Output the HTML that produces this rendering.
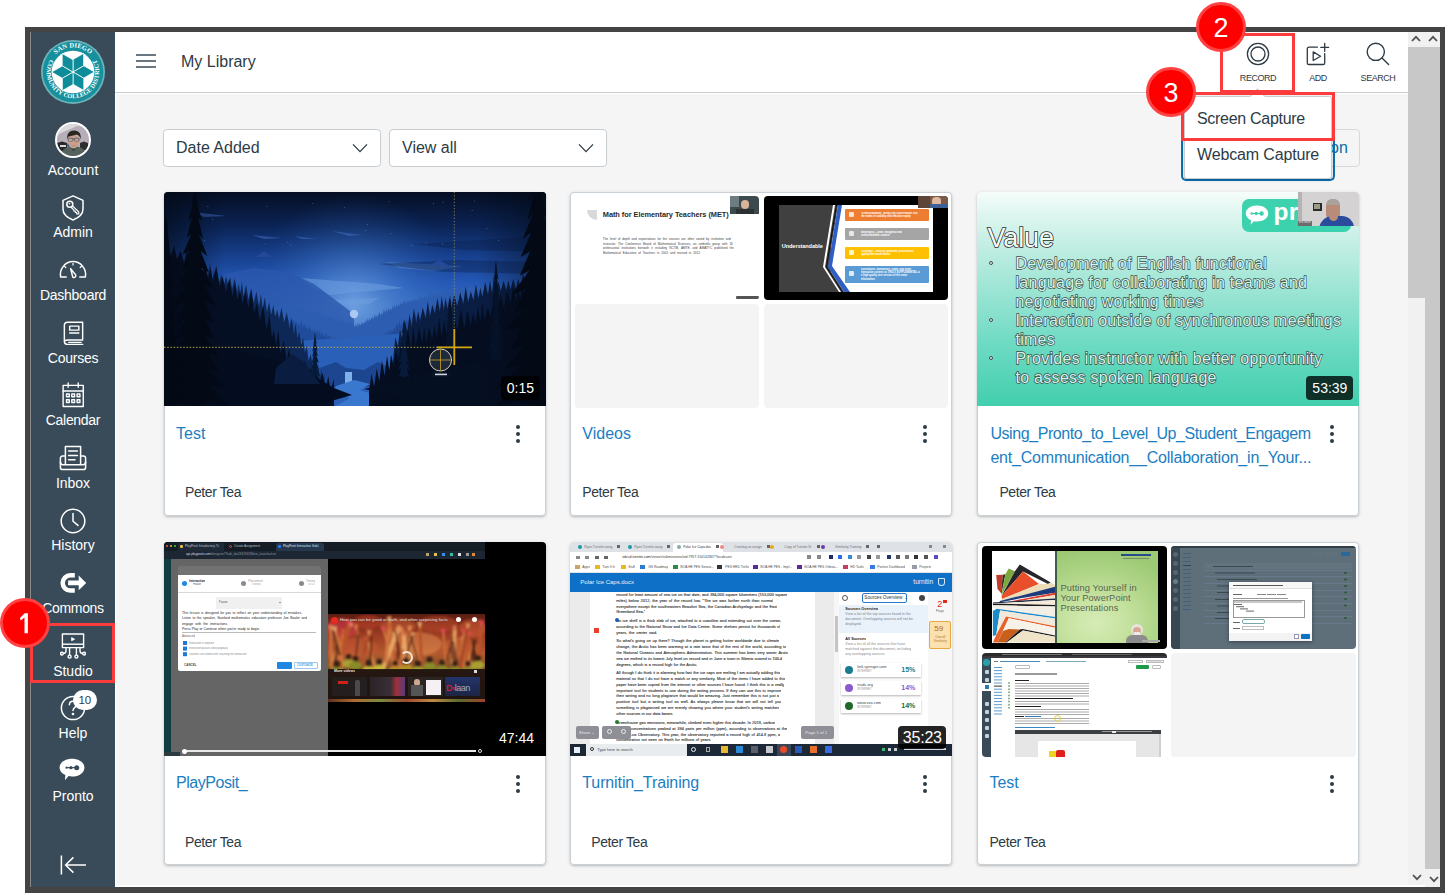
<!DOCTYPE html>
<html>
<head>
<meta charset="utf-8">
<title>Canvas Studio - My Library</title>
<style>
*{box-sizing:border-box;margin:0;padding:0}
html,body{width:1445px;height:893px;overflow:hidden;background:#fff}
body{font-family:"Liberation Sans",sans-serif;color:#2d3b45;position:relative}
.abs{position:absolute}
.hl{position:absolute;top:41px;text-align:center;font-size:9px;line-height:10px;color:#2d3b45;letter-spacing:-.45px}
.mi{font-size:16px;line-height:22px;color:#2d3b45;white-space:nowrap}
.sel svg{position:absolute;right:12px;top:13px}
#frame{position:absolute;left:25px;top:27px;width:1420px;height:866px;background:#444}
#app{position:absolute;left:30px;top:32px;width:1410px;height:855px;background:#f5f5f5;overflow:hidden}
#edge{position:absolute;left:0;top:0;width:1px;height:855px;background:#8a8a8a;z-index:3}
#side{position:absolute;left:1px;top:0;width:84px;height:855px;background:#394b58}
.nav{position:absolute;left:0;width:84px;text-align:center;color:#fff;font-size:14px;line-height:16px;white-space:nowrap}
.nav svg{position:absolute}
#head{position:absolute;left:85px;top:0;width:1293px;height:61px;background:#fff;border-bottom:1px solid #c7cdd1}
#sb1{position:absolute;left:1378px;top:0;width:17px;height:853px;background:#f1f1f1}
#sb2{position:absolute;left:1395px;top:0;width:15px;height:855px;background:#f1f1f1}
.thumbbar{position:absolute;left:0;width:17px;background:#c8c8c8}
.sel{position:absolute;top:97px;height:38px;width:218px;background:#fff;border:1px solid #c7cdd1;border-radius:4px;font-size:16px;line-height:36px;padding-left:12px;color:#2d3b45}
.card{position:absolute;width:382px;height:324.400px;background:#fff;border-radius:4px;box-shadow:inset 0 0 0 1px #c9d1d6,0 1px 2px rgba(0,0,0,.16),0 1px 4px rgba(0,0,0,.1);overflow:hidden}
.r2{height:323.400px}
.r2 .title{top:229px}
.thumb{position:absolute;left:0;top:0;width:382px;height:214px;overflow:hidden}
.title{position:absolute;left:12px;top:230px;font-size:16px;line-height:24px;color:#1b7ec2;white-space:nowrap}
.owner{position:absolute;top:291px;font-size:14px;line-height:18px;color:#2d3b45;white-space:nowrap;letter-spacing:-.4px}
.dots{position:absolute;left:351px;top:233px;width:6px;height:20px}
.dots i{position:absolute;left:1px;width:4px;height:4px;border-radius:50%;background:#2d3b45}
.dur{position:absolute;right:6px;bottom:6px;height:24px;padding:0 6px;border-radius:4px;background:rgba(0,0,0,.8);color:#fff;font-size:14px;line-height:24px}
.q{position:absolute;width:184.500px;height:104px;border-radius:4px;background:#f4f4f4;overflow:hidden}
.ln i{position:absolute;display:block}
.dl{position:absolute;left:46px;font-size:3.950px;line-height:5.820px;height:5.820px;color:#333;-webkit-text-stroke:.12px #444;white-space:nowrap;text-align:justify;text-align-last:justify;overflow:hidden}
.tt{position:absolute;white-space:nowrap;overflow:hidden}
.vb{font-size:16px;line-height:19.05px;color:#d4f4ec;-webkit-text-stroke:1.3px #3a4a46;paint-order:stroke fill;white-space:nowrap;letter-spacing:.3px}
.redc{position:absolute;width:50px;height:50px;border-radius:50%;background:#fe0000;border:3px solid #ff4141;color:#fff;font-size:27px;line-height:44px;padding-top:1px;text-align:center;z-index:20}
.redb{position:absolute;border:3px solid #fc3c3c;z-index:19}
</style>
</head>
<body>
<div id="frame"></div>
<div id="app">
  <div id="edge"></div>
  <div id="side">
    <!--NAV-->
    <svg class="abs" style="left:9px;top:7px" width="66" height="66" viewBox="-33 -33 66 66">
      <circle r="32" fill="#6fb3ba"/><circle r="30.3" fill="#15909c"/><circle r="21.3" fill="#fff"/>
      <g fill="#0f8c99" stroke="#fff" stroke-width="0.7">
        <g id="dm"><path d="M0 0 L0 -12.5 L10.6 -18.6 L10.6 -6.1 Z"/></g>
        <use href="#dm" transform="rotate(60)"/><use href="#dm" transform="rotate(120)"/><use href="#dm" transform="rotate(180)"/><use href="#dm" transform="rotate(240)"/><use href="#dm" transform="rotate(300)"/>
      </g>
      <path id="arcT" d="M -18.6 -16.2 A 24.7 24.7 0 0 1 18.6 -16.2" fill="none"/>
      <path id="arcB" d="M -22 -14.2 A 26.2 26.2 0 1 0 22 -14.2" fill="none"/>
      <text font-family="Liberation Serif" font-weight="bold" font-size="6.6" fill="#fff" letter-spacing="0.1"><textPath href="#arcT" startOffset="50%" text-anchor="middle">• SAN DIEGO •</textPath></text>
      <text font-family="Liberation Serif" font-weight="bold" font-size="6.3" fill="#fff" letter-spacing="0.05"><textPath href="#arcB" startOffset="50%" text-anchor="middle">COMMUNITY COLLEGE DISTRICT</textPath></text>
    </svg>
    <!-- Account -->
    <div class="abs" style="left:24px;top:90px;width:36px;height:36px;border-radius:50%;background:#fff"></div>
    <svg class="abs" style="left:26px;top:92px" width="32" height="32" viewBox="0 0 32 32">
      <defs><clipPath id="avc"><circle cx="16" cy="16" r="16"/></clipPath></defs>
      <g clip-path="url(#avc)">
        <rect width="32" height="32" fill="#b6aeb8"/>
        <path d="M0 0 L32 0 L32 3 L20 2 L4 9 L0 12 Z" fill="#dcdadc"/>
        <path d="M0 19 L5 17.500 L10 19 L10 27 L0 27 Z" fill="#26282a"/>
        <path d="M3 21 L9 21 L9 23 L3 23 Z" fill="#d8d8d8"/>
        <path d="M23 19 L27 17.500 L31 19 L32 26 L23 26 Z" fill="#2c2e30"/>
        <path d="M11 19 C9.500 21 10 23 11.500 24 L13 21 Z" fill="#2f5f8a"/>
        <path d="M3 32 C4 26 9 23.500 13 22.500 L20 22.500 C25 23.500 29 26 30 32 Z" fill="#56625e"/>
        <path d="M13 22.500 L16.500 27.500 L20.500 22.500 Z" fill="#3a4340"/>
        <ellipse cx="16.600" cy="17" rx="5.700" ry="7.600" fill="#c9a08c"/>
        <path d="M10.300 15.500 C9.600 10 12 6.600 17 6.500 C22 6.400 24.500 10 23.600 15.200 C23 12.500 21.500 11 19.500 10.600 C16.500 12 13 12 11.600 12.600 C11 13.400 10.600 14.400 10.300 15.500 Z" fill="#2a2422"/>
        <path d="M11 15 L22.500 15" stroke="#4a4448" stroke-width=".8"/>
        <rect x="11.200" y="14.200" width="4.600" height="3" rx="1" fill="#c8ccd4" fill-opacity=".55" stroke="#4a4448" stroke-width=".6"/>
        <rect x="17.400" y="14.200" width="4.600" height="3" rx="1" fill="#c8ccd4" fill-opacity=".55" stroke="#4a4448" stroke-width=".6"/>
        <path d="M14.600 21.300 C16 22 17.400 22 18.800 21.300" stroke="#a87868" stroke-width=".6" fill="none"/>
      </g>
    </svg>
    <div class="nav" style="top:130px">Account</div>
    <!-- Admin -->
    <svg class="abs" style="left:29px;top:163px" width="26" height="27" viewBox="0 0 26 27" fill="none" stroke="#fff" stroke-width="1.500" stroke-linejoin="round" stroke-linecap="round">
      <path d="M13 0.900 L23 5.400 L23 14 C23 19 18.500 22.800 13 25 C7.500 22.800 3 19 3 14 L3 5.400 Z"/>
      <circle cx="9.800" cy="9.300" r="3"/><circle cx="9.300" cy="8.800" r="0.450" fill="#fff" stroke-width=".6"/>
      <path d="M11.300 12.500 L12.800 11.100 L18.800 17 L18.800 18.900 L16.700 18.900 L16.700 17.500 L15.300 17.500 L15.300 16.100 L13.900 16.100 L13.900 15 Z" stroke-width="1.100"/>
    </svg>
    <div class="nav" style="top:192px">Admin</div>
    <!-- Dashboard -->
    <svg class="abs" style="left:27px;top:227.700px" width="30" height="19.300" viewBox="0 0 30 20" preserveAspectRatio="none" fill="none" stroke="#fff" stroke-width="1.5" stroke-linecap="round" stroke-linejoin="round">
      <path d="M8.2 17.6 L2.6 17.6 C1.2 9.5 7 1.6 15 1.6 C23 1.6 28.8 9.5 27.4 17.6 L21.8 17.6"/>
      <path d="M12.6 9 L17.5 15.2 C18.6 17.2 16.6 19 14.8 17.7 Z"/>
      <path d="M15 3.4 L15 5.2 M6.6 6.6 L7.8 7.8 M23.4 6.6 L22.2 7.8" stroke-width="1.2"/>
    </svg>
    <div class="nav" style="top:255px;letter-spacing:-.25px">Dashboard</div>
    <!-- Courses -->
    <svg class="abs" style="left:31.500px;top:288.600px" width="21" height="24.800" viewBox="0 0 22 26" fill="none" stroke="#fff" stroke-width="1.5" stroke-linejoin="round" stroke-linecap="round">
      <path d="M20.6 20 L20.6 1.4 L4.6 1.4 C2.6 1.4 1.4 2.6 1.4 4.4 L1.4 21.6 C1.4 23.4 2.8 24.6 4.6 24.6 L20.6 24.6 M20.6 20 L4.6 20 C2.6 20 1.4 21 1.4 22.2 M6 22.4 L19 22.4"/>
      <rect x="7" y="5.4" width="9.6" height="4.2"/><path d="M7 12.6 L16.6 12.6"/>
    </svg>
    <div class="nav" style="top:318px;letter-spacing:-.25px">Courses</div>
    <!-- Calendar -->
    <svg class="abs" style="left:30.800px;top:350px" width="22.400" height="26.200" viewBox="0 0 24 28" fill="none" stroke="#fff" stroke-width="1.5" stroke-linejoin="round" stroke-linecap="round">
      <rect x="1.2" y="3.6" width="21.6" height="22.6"/><path d="M1.2 9.6 L22.8 9.6 M6.6 1 L6.6 5.6 M17.4 1 L17.4 5.6"/>
      <g stroke-width="1.500"><rect x="4.8" y="12.8" width="3" height="3"/><rect x="10.5" y="12.8" width="3" height="3"/><rect x="16.2" y="12.8" width="3" height="3"/><rect x="4.8" y="19" width="3" height="3"/><rect x="10.5" y="19" width="3" height="3"/><rect x="16.2" y="19" width="3" height="3"/></g>
    </svg>
    <div class="nav" style="top:380px;letter-spacing:-.3px">Calendar</div>
    <!-- Inbox -->
    <svg class="abs" style="left:28px;top:413px" width="28" height="26" viewBox="0 0 28 26" fill="none" stroke="#fff" stroke-width="1.5" stroke-linejoin="round" stroke-linecap="round">
      <path d="M6.4 19 L6.4 1.4 L21.6 1.4 L21.6 19"/><path d="M9.6 6 L18.4 6 M9.6 10.4 L18.4 10.4 M9.6 14.8 L16 14.8"/>
      <path d="M6.4 11 L3.6 11 C2.2 11 1.4 12 1.4 13.2 L1.4 22.4 C1.4 23.8 2.4 24.6 3.6 24.6 L24.4 24.6 C25.8 24.6 26.6 23.6 26.6 22.4 L26.6 13.2 C26.6 11.8 25.6 11 24.4 11 L21.6 11"/>
      <path d="M1.4 17 C1.4 18.6 2.6 19.8 4 19.8 L24 19.8 C25.4 19.8 26.6 18.6 26.6 17"/>
    </svg>
    <div class="nav" style="top:443px">Inbox</div>
    <!-- History -->
    <svg class="abs" style="left:29px;top:476px" width="26" height="26" viewBox="0 0 26 26" fill="none" stroke="#fff" stroke-width="1.5" stroke-linecap="round">
      <circle cx="13" cy="13" r="11.8"/><path d="M13 5.6 L13 13.2 L18 17.4"/>
    </svg>
    <div class="nav" style="top:505px">History</div>
    <!-- Commons -->
    <svg class="abs" style="left:28.500px;top:541px" width="27" height="21" viewBox="0 0 27 21" fill="#fff">
      <path d="M14.800 0.100 L10.300 0.100 A9.850 9.850 0 0 0 10.300 19.800 L14.800 19.800 L14.800 15.300 L10.300 15.300 A5.350 5.350 0 0 1 10.300 4.600 L14.800 4.600 Z"/>
      <path d="M8.100 7.500 L18.700 7.500 L18.700 2.600 L26.200 9.900 L18.700 17.200 L18.700 12.300 L8.100 12.300 Z"/>
    </svg>
    <div class="nav" style="top:568px;letter-spacing:-.35px">Commons</div>
    <!-- Studio -->
    <svg class="abs" style="left:29px;top:601px" width="26" height="26" viewBox="0 0 26 26" fill="none" stroke="#fff" stroke-width="1.4" stroke-linejoin="round">
      <rect x="2.4" y="1" width="21.2" height="13.6"/><path d="M2.4 11.2 L23.6 11.2" />
      <path d="M11.6 4.6 L14.6 6.2 L11.6 7.8 Z" fill="#fff" stroke-width="0.8"/>
      <path d="M9.6 14.6 L9.6 22 M16.4 14.6 L16.4 22 M6 14.6 L6 18 C6 19.6 5 20.4 3.4 20.4 M20 14.6 L20 18 C20 19.6 21 20.4 22.6 20.4"/>
      <circle cx="9.6" cy="23.6" r="1.5"/><circle cx="16.4" cy="23.6" r="1.5"/><circle cx="2" cy="20.6" r="1.4"/><circle cx="24" cy="20.6" r="1.4"/>
    </svg>
    <div class="nav" style="top:631px">Studio</div>
    <!-- Help -->
    <svg class="abs" style="left:29px;top:663px" width="26" height="26" viewBox="0 0 26 26" fill="none" stroke="#fff" stroke-width="1.5" stroke-linecap="round">
      <circle cx="13" cy="13" r="11.6"/><path d="M9.4 9.8 C9.4 7.6 11 6.2 13 6.2 C15 6.2 16.6 7.6 16.6 9.6 C16.6 12.4 13 12.4 13 15.4"/><circle cx="13" cy="19" r="0.6" fill="#fff"/>
    </svg>
    <div class="abs" style="left:41.700px;top:657.700px;width:24px;height:20px;border-radius:10px;background:#fff;color:#2d3b45;font-size:11.5px;line-height:20px;text-align:center;letter-spacing:-.3px">10</div>
    <div class="nav" style="top:693px">Help</div>
    <!-- Pronto -->
    <svg class="abs" style="left:28px;top:726px" width="26" height="23.500" viewBox="0 0 27 24">
      <path d="M13.5 0.6 C20.8 0.6 26.4 4.6 26.4 9.8 C26.4 15 20.8 19 13.5 19 C12.2 19 11 18.9 9.9 18.6 L6.2 22.8 L6.6 17.4 C3 15.8 0.6 13 0.6 9.8 C0.6 4.6 6.2 0.6 13.5 0.6 Z" fill="#fff"/>
      <path d="M7.6 9.8 L18 9.8" stroke="#394b58" stroke-width="1.2"/><circle cx="7.8" cy="9.8" r="1.1" fill="#394b58"/><circle cx="12.4" cy="9.8" r="1.7" fill="#394b58"/><circle cx="18.4" cy="9.8" r="2.6" fill="#394b58"/>
    </svg>
    <div class="nav" style="top:756px">Pronto</div>
    <!-- collapse -->
    <svg class="abs" style="left:29px;top:822px" width="27" height="22" viewBox="0 0 27 22" fill="none" stroke="#fff" stroke-width="1.5">
      <path d="M1.4 1.6 L1.4 20.4 M5.6 11 L26 11 M13.4 3.4 L5.6 11 L13.4 18.6"/>
    </svg>
    <!--/NAV-->
  </div>
  <div id="head">
    <!--HEAD-->
    <div class="abs" style="left:21px;top:22px;width:20px;height:2px;background:#6b7780"></div>
    <div class="abs" style="left:21px;top:28px;width:20px;height:2px;background:#6b7780"></div>
    <div class="abs" style="left:21px;top:34px;width:20px;height:2px;background:#6b7780"></div>
    <div class="abs" style="left:66px;top:19px;font-size:16px;line-height:22px;color:#2d3b45;white-space:nowrap">My Library</div>
    <!-- RECORD -->
    <svg class="abs" style="left:1131px;top:10px" width="24" height="24" viewBox="0 0 24 24" fill="none" stroke="#2d3b45" stroke-width="1.3"><circle cx="12" cy="12" r="10.6"/><circle cx="12" cy="12" r="7"/></svg>
    <div class="hl" style="left:1113px;width:60px">RECORD</div>
    <!-- ADD -->
    <svg class="abs" style="left:1191px;top:9px" width="24" height="26" viewBox="0 0 24 26" fill="none" stroke="#2d3b45" stroke-width="1.300" stroke-linejoin="round" stroke-linecap="round">
      <path d="M11.400 6.200 L2.900 6.200 C1.900 6.200 1.300 6.800 1.300 7.800 L1.300 21.900 C1.300 22.900 1.900 23.500 2.900 23.500 L17.100 23.500 C18.100 23.500 18.700 22.900 18.700 21.900 L18.700 12.700"/>
      <path d="M7.200 10.900 L14.600 15.200 L7.200 19.500 Z"/><path d="M18.700 2.500 L18.700 10.300 M14.800 6.400 L22.600 6.400"/>
    </svg>
    <div class="hl" style="left:1173px;width:60px">ADD</div>
    <!-- SEARCH -->
    <svg class="abs" style="left:1251px;top:10px" width="24" height="24" viewBox="0 0 24 24" fill="none" stroke="#2d3b45" stroke-width="1.4" stroke-linecap="round"><circle cx="9.8" cy="9.8" r="8.6"/><path d="M16 16 L22.6 22.6"/></svg>
    <div class="hl" style="left:1233px;width:60px">SEARCH</div>
    <!--/HEAD-->
  </div>
  <div class="abs" style="left:85px;top:61px;width:1310px;height:794px;border-left:1px solid #fff;border-top:1px solid #fff;border-bottom:2px solid #fff"></div>
  <div id="main">
    <div class="sel" style="left:133px">Date Added<svg width="16" height="10" viewBox="0 0 16 10" fill="none" stroke="#2d3b45" stroke-width="1.3"><path d="M1 1.4 L8 8.6 L15 1.4"/></svg></div>
    <div class="sel" style="left:359px">View all<svg width="16" height="10" viewBox="0 0 16 10" fill="none" stroke="#2d3b45" stroke-width="1.3"><path d="M1 1.4 L8 8.6 L15 1.4"/></svg></div>
    <!--CARDS-->
    <!-- Card 1 -->
    <div class="card" style="left:134px;top:160px">
      <div class="thumb"><svg class="abs" style="left:0;top:0" width="382" height="214" viewBox="0 0 382 214">
<defs><linearGradient id="sky" x1="0" y1="0" x2="0" y2="1"><stop offset="0" stop-color="#050e22"/><stop offset=".16" stop-color="#0b2456"/><stop offset=".3" stop-color="#17408e"/><stop offset=".42" stop-color="#2458b6"/><stop offset=".56" stop-color="#3a70c2"/><stop offset=".7" stop-color="#2a5cae"/><stop offset="1" stop-color="#0a1c3c"/></linearGradient><radialGradient id="glow" cx="190" cy="112" r="110" gradientUnits="userSpaceOnUse"><stop offset="0" stop-color="#7fb0ea" stop-opacity=".75"/><stop offset=".5" stop-color="#4a82d0" stop-opacity=".35"/><stop offset="1" stop-color="#2050a0" stop-opacity="0"/></radialGradient><linearGradient id="vig" x1="0" y1="0" x2="1" y2="0"><stop offset="0" stop-color="#020812" stop-opacity=".6"/><stop offset=".16" stop-color="#020812" stop-opacity="0"/><stop offset=".82" stop-color="#020812" stop-opacity="0"/><stop offset="1" stop-color="#020812" stop-opacity=".5"/></linearGradient></defs>
<rect width="382" height="214" fill="url(#sky)"/><rect width="382" height="214" fill="url(#glow)"/>
<g fill="#6d9fe0" opacity=".55"><path d="M136 86 L215 92 L240 96 L196 100 L165 103 L150 96 Z"/><path d="M160 108 L215 106 L205 112 L175 113 Z"/><path d="M222 70 L300 74 L270 79 L235 76 Z" opacity=".6"/></g>
<g fill="#3a67b8" opacity=".6"><path d="M168 39 L198 43 L185 44 Z"/><path d="M88 43 L118 46 L100 47 Z"/><path d="M130 44 L153 47 L138 47 Z"/><path d="M30 20 L62 24 L40 25 Z"/></g>
<g fill="#0a1f4a" opacity=".38"><path d="M250 52 L382 44 L382 60 L300 58 Z"/><path d="M215 72 L290 68 L382 70 L382 82 L280 80 Z"/></g>
<path d="M60 82 L90 76 L125 80 L150 92 L190 122 L190 150 L60 150 Z" fill="#2a58ac" opacity=".8"/>
<path d="M92 65 L100 59 L108 65 Z M266 73 L275 68 L284 73 Z" fill="#24499a"/>
<path d="M95.0 214.0 L95.0 112.0 L96.1 108.5 L97.2 112.4 L98.6 109.3 L100.1 112.9 L101.2 109.4 L102.3 113.3 L103.2 110.0 L104.1 113.7 L105.3 109.5 L106.5 114.1 L107.4 111.3 L108.2 114.4 L109.0 110.1 L109.8 114.7 L111.1 112.8 L112.4 115.2 L113.9 110.5 L115.3 115.7 L116.6 112.1 L117.8 116.1 L118.7 114.3 L119.6 116.5 L120.7 114.5 L121.8 116.9 L122.7 114.3 L123.6 117.2 L124.4 114.0 L125.2 117.5 L126.3 113.2 L127.3 117.9 L128.5 114.2 L129.6 118.3 L130.7 114.5 L131.9 118.7 L133.0 116.1 L134.1 119.1 L135.6 114.4 L137.1 119.6 L138.4 115.8 L139.8 120.1 L140.8 117.6 L141.8 120.5 L142.8 118.5 L143.7 120.9 L145.0 117.9 L146.4 121.3 L147.8 118.4 L149.1 121.8 L150.6 117.7 L152.1 122.7 L152.8 120.3 L153.6 123.2 L155.0 120.3 L156.4 124.1 L157.9 121.4 L159.4 125.1 L160.2 121.5 L161.0 125.7 L162.4 123.3 L163.7 126.6 L164.5 123.8 L165.3 127.1 L166.8 123.3 L168.3 128.1 L169.1 125.6 L169.9 128.6 L170.8 126.7 L171.6 129.2 L172.9 127.1 L174.3 130.1 L175.5 127.1 L176.6 130.9 L177.5 127.0 L178.4 131.5 L179.3 127.8 L180.1 132.0 L180.9 129.1 L181.8 132.6 L182.7 130.1 L183.6 133.2 L185.1 129.3 L186.6 134.2 L187.5 129.9 L188.5 134.8 L189.4 132.0 L190.3 135.4 L191.7 132.0 L193.1 135.4 L193.9 130.1 L194.8 134.6 L195.7 131.4 L196.6 133.7 L197.9 130.1 L199.2 132.4 L200.2 129.7 L201.2 131.4 L202.0 127.2 L202.8 130.6 L203.8 126.3 L204.7 129.7 L205.7 125.8 L206.7 128.6 L208.2 124.4 L209.7 127.2 L210.9 122.0 L212.0 126.0 L212.9 123.1 L213.8 125.1 L215.3 119.9 L216.7 123.7 L217.6 120.6 L218.6 122.7 L219.9 117.2 L221.2 121.4 L222.1 116.1 L223.0 120.5 L224.4 116.0 L225.8 119.1 L226.9 116.3 L227.9 118.0 L228.7 112.8 L229.5 117.3 L230.4 112.7 L231.3 116.3 L232.3 111.4 L233.2 115.4 L234.4 111.9 L235.6 114.2 L236.5 109.6 L237.4 113.3 L238.2 110.2 L239.0 112.5 L240.1 107.4 L241.3 111.7 L242.5 108.6 L243.7 111.1 L245.2 108.2 L246.6 110.5 L247.4 107.5 L248.1 110.1 L249.2 107.7 L250.3 109.6 L251.2 106.3 L252.1 109.2 L253.3 106.5 L254.4 108.6 L255.5 103.7 L256.5 108.2 L258.0 103.8 L259.4 107.5 L260.7 103.4 L262.0 106.9 L262.8 104.6 L263.7 106.5 L264.5 101.6 L265.2 106.1 L266.5 100.9 L267.8 105.5 L268.5 101.4 L269.3 105.2 L270.4 100.7 L271.5 104.6 L272.5 99.4 L273.5 104.2 L274.3 100.4 L275.1 103.8 L276.4 98.8 L277.7 103.2 L279.0 98.8 L280.3 102.6 L281.7 97.5 L283.0 102.0 L284.0 97.7 L285.0 101.5 L286.5 96.5 L287.9 100.8 L289.0 96.2 L290.0 100.3 L291.4 96.3 L292.8 99.7 L294.0 96.2 L295.3 99.1 L296.4 95.0 L297.6 98.6 L298.4 94.4 L299.3 98.2 L300.7 93.3 L302.2 97.8 L303.5 94.6 L304.8 97.6 L306.1 93.8 L307.4 97.5 L308.5 92.9 L309.6 97.3 L310.4 93.0 L311.2 97.2 L312.0 93.3 L312.8 97.1 L313.9 94.3 L315.0 96.9 L316.3 93.3 L317.5 96.7 L318.7 91.9 L320.0 96.5 L320.9 94.4 L321.8 96.4 L322.8 92.3 L323.8 96.3 L324.7 93.7 L325.6 96.1 L327.0 92.0 L328.5 95.9 L329.5 91.2 L330.6 95.8 L331.6 91.7 L332.6 95.6 L333.5 92.3 L334.4 95.5 L335.8 90.6 L337.1 95.3 L338.5 92.0 L339.9 95.1 L341.1 92.0 L342.3 94.9 L343.2 91.4 L344.0 94.8 L345.4 90.1 L346.8 94.6 L348.1 89.6 L349.3 94.4 L350.3 91.8 L351.3 94.2 L352.3 91.3 L353.4 94.1 L354.3 90.8 L355.2 94.0 L356.5 90.4 L357.7 93.8 L358.7 89.2 L359.7 93.6 L361.1 90.2 L362.6 93.4 L363.4 91.3 L364.2 93.3 L365.7 91.1 L367.1 93.1 L368.3 89.3 L369.6 92.9 L370.6 88.5 L371.6 92.8 L372.3 90.3 L373.1 92.7 L374.2 90.5 L375.3 92.5 L376.7 89.7 L378.0 92.3 L378.9 90.1 L379.7 92.2 L381.0 88.7 L382.0 92.0 L382.0 214.0 Z" fill="#2c5db0"/>
<circle cx="190" cy="122" r="4.2" fill="#a9c9f2"/>
<path d="M80.0 214.0 L80.0 118.0 L81.3 112.7 L82.6 118.7 L84.0 115.5 L85.4 119.5 L86.3 115.3 L87.2 120.0 L88.4 114.1 L89.5 120.7 L90.9 115.7 L92.4 121.5 L93.7 116.2 L95.1 122.2 L96.1 117.7 L97.1 122.8 L98.1 116.5 L99.2 123.4 L100.1 117.4 L101.1 123.9 L102.0 118.4 L103.0 124.4 L104.2 120.1 L105.3 125.1 L106.9 122.5 L108.5 126.0 L109.4 119.6 L110.4 126.5 L111.7 123.5 L113.0 127.2 L114.7 120.9 L116.4 128.2 L117.4 123.8 L118.3 128.7 L119.4 124.8 L120.4 129.3 L121.8 126.0 L123.2 130.1 L124.6 127.3 L126.1 130.9 L127.1 124.9 L128.1 131.5 L129.4 127.1 L130.6 132.3 L132.0 128.0 L133.3 133.5 L134.5 130.9 L135.8 134.6 L137.2 128.4 L138.7 135.9 L140.4 131.0 L142.1 137.4 L143.3 133.5 L144.4 138.5 L145.9 133.5 L147.4 139.8 L148.3 136.3 L149.3 140.7 L150.5 136.2 L151.7 141.8 L153.3 137.5 L154.8 143.2 L155.7 137.3 L156.7 144.0 L157.9 139.5 L159.1 145.1 L160.2 140.9 L161.3 146.1 L162.5 140.5 L163.7 147.2 L164.7 142.4 L165.7 148.1 L166.7 142.7 L167.8 149.0 L168.7 145.3 L169.6 149.8 L170.8 144.9 L172.0 151.0 L172.9 146.6 L173.9 151.9 L174.9 148.3 L176.0 153.0 L177.3 146.8 L178.6 154.3 L179.8 148.1 L181.1 155.6 L182.2 149.4 L183.2 156.6 L184.4 153.4 L185.6 157.8 L187.1 151.9 L188.6 159.3 L189.5 155.7 L190.4 160.2 L191.9 156.6 L193.4 161.7 L194.5 159.2 L195.6 162.8 L196.5 157.8 L197.5 163.7 L199.2 157.6 L200.8 164.3 L202.1 160.1 L203.5 162.0 L204.6 154.9 L205.8 160.1 L207.3 153.2 L208.9 157.4 L210.0 151.3 L211.1 155.5 L212.3 148.9 L213.6 153.3 L214.7 145.6 L215.8 151.4 L217.5 146.4 L219.1 148.6 L220.2 141.2 L221.3 146.7 L222.5 139.0 L223.6 144.8 L224.9 137.9 L226.2 142.5 L227.7 137.4 L229.1 140.0 L230.3 135.0 L231.4 138.1 L232.8 131.1 L234.3 135.6 L235.3 128.3 L236.3 134.5 L237.5 130.0 L238.8 133.4 L240.0 126.0 L241.3 132.4 L242.6 126.3 L244.0 131.2 L245.6 123.7 L247.2 129.9 L248.7 124.6 L250.3 128.6 L251.6 121.4 L253.0 127.5 L254.5 121.5 L256.1 126.2 L257.2 121.2 L258.4 125.2 L259.9 119.3 L261.4 124.0 L262.3 117.7 L263.2 123.2 L264.8 116.3 L266.5 121.8 L268.1 114.5 L269.7 120.5 L271.0 113.8 L272.4 119.4 L273.6 115.5 L274.8 118.4 L275.9 113.6 L277.1 117.4 L278.8 110.9 L280.4 116.0 L281.8 110.0 L283.1 114.9 L284.1 109.3 L285.1 114.1 L286.6 108.9 L288.0 112.8 L289.1 107.7 L290.2 112.0 L291.4 106.1 L292.5 111.8 L293.5 108.3 L294.6 111.6 L295.7 105.7 L296.9 111.4 L298.4 105.6 L299.9 111.1 L301.5 106.5 L303.2 110.9 L304.1 105.8 L305.0 110.7 L306.3 106.9 L307.5 110.5 L309.0 106.0 L310.4 110.2 L311.5 105.8 L312.6 110.0 L314.2 106.9 L315.9 109.7 L317.1 105.5 L318.3 109.5 L319.3 104.7 L320.4 109.4 L321.5 102.6 L322.5 109.2 L323.8 103.3 L325.1 108.9 L326.2 104.0 L327.2 108.8 L328.6 102.3 L330.0 108.5 L331.1 103.6 L332.2 108.3 L333.7 101.9 L335.3 108.1 L336.4 102.8 L337.5 107.9 L339.0 103.2 L340.5 107.6 L342.0 101.8 L343.4 107.4 L345.1 102.0 L346.7 107.1 L348.2 102.5 L349.6 106.8 L351.1 102.4 L352.6 106.6 L353.9 102.0 L355.2 106.3 L356.4 102.7 L357.5 106.1 L358.6 100.9 L359.7 105.9 L360.8 102.7 L361.9 105.8 L363.4 101.5 L364.9 105.5 L366.6 99.9 L368.2 105.2 L369.5 98.6 L370.7 105.0 L372.3 100.6 L373.9 104.7 L374.9 99.1 L375.9 104.5 L377.5 99.0 L379.1 104.3 L380.6 99.5 L382.0 104.0 L382.0 214.0 Z" fill="#214c9c"/>
<path d="M120 150 L260 140 L260 214 L120 214 Z" fill="#2a60b8"/>
<path d="M150 178 L172 170 L182 176 L200 178 L214 170 L226 176 L240 180 L240 195 L150 195 Z" fill="#1c4690"/>
<rect x="181" y="180" width="7" height="12" fill="#7fb0ea"/>
<path d="M172 194 L190 188 L206 192 L196 198 L214 204 L238 214 L172 214 L186 206 L170 200 Z" fill="#3a78d0"/>
<path d="M40.0 214.0 L40.0 82.0 L41.8 70.2 L43.6 83.9 L46.0 71.3 L48.4 86.5 L50.1 77.8 L51.8 88.3 L53.5 79.6 L55.2 90.1 L57.6 82.5 L60.0 92.7 L62.2 84.3 L64.4 95.0 L66.2 85.0 L68.1 97.0 L70.6 86.2 L73.2 100.1 L74.7 91.2 L76.2 102.1 L77.9 89.2 L79.6 104.4 L82.1 92.4 L84.6 107.7 L87.1 96.2 L89.7 111.1 L92.4 99.4 L95.1 114.7 L96.9 102.0 L98.7 117.1 L100.8 105.2 L102.9 119.9 L105.1 110.2 L107.3 122.7 L109.3 112.9 L111.2 125.1 L113.1 117.5 L115.0 127.6 L117.5 115.6 L120.1 130.8 L122.8 120.2 L125.5 136.5 L127.7 126.1 L129.9 142.2 L131.6 131.6 L133.3 146.5 L135.3 139.9 L137.4 153.0 L139.1 145.2 L140.9 160.7 L142.7 153.5 L144.5 168.7 L146.8 162.3 L149.0 176.3 L150.7 167.2 L152.3 181.1 L154.1 174.0 L155.9 186.2 L157.7 178.1 L159.4 191.2 L161.0 179.4 L160.0 192.0 L160.0 214.0 Z" fill="#0d2856"/>
<path d="M225.0 214.0 L225.0 185.0 L226.9 163.1 L228.8 171.8 L231.3 145.4 L233.9 153.9 L236.0 137.5 L238.1 146.3 L240.7 128.2 L243.4 139.9 L245.5 122.2 L247.7 134.8 L249.9 116.1 L252.2 131.0 L254.1 119.0 L256.0 129.1 L258.8 115.5 L261.7 126.4 L263.8 109.1 L265.9 124.4 L268.4 112.8 L270.9 121.9 L273.4 105.8 L275.8 119.7 L277.8 104.2 L279.7 118.5 L281.6 105.8 L283.5 117.3 L285.4 105.8 L287.2 116.1 L290.2 102.5 L293.2 114.2 L296.2 100.3 L299.2 112.3 L301.7 94.5 L304.2 110.3 L306.8 99.3 L309.4 108.2 L311.9 92.5 L314.4 106.2 L316.4 95.6 L318.3 104.7 L321.2 89.9 L324.0 102.4 L326.0 88.5 L328.0 100.8 L330.0 83.8 L332.0 99.7 L334.4 89.4 L336.8 99.0 L339.6 88.7 L342.3 98.1 L344.4 88.5 L346.5 97.5 L349.2 87.0 L351.9 96.6 L354.3 86.4 L356.7 95.9 L359.1 80.4 L361.4 95.2 L363.8 81.7 L366.2 94.4 L368.6 81.1 L371.0 93.7 L373.5 83.5 L375.9 92.9 L378.3 81.4 L380.6 92.2 L383.5 74.5 L382.0 92.0 L382.0 214.0 Z" fill="#0a1d42"/>
<path d="M0.0 214.0 L0.0 60.0 L3.4 51.7 L6.9 63.7 L10.0 53.8 L13.1 67.0 L16.6 58.7 L20.1 70.7 L23.4 55.7 L26.7 74.2 L30.0 56.0 L33.3 78.4 L35.6 66.7 L38.0 81.9 L41.1 71.3 L44.1 86.4 L46.5 75.8 L48.9 89.9 L52.2 73.5 L55.5 94.7 L58.7 84.8 L61.9 99.3 L65.3 86.6 L68.6 104.2 L71.0 91.3 L73.3 107.5 L76.0 98.6 L78.6 111.3 L81.4 99.7 L84.3 115.4 L87.2 98.1 L90.0 120.7 L93.0 110.6 L95.9 128.6 L99.2 113.0 L102.5 137.4 L105.3 121.6 L108.0 145.7 L110.0 138.0 L112.1 153.1 L114.3 137.9 L116.6 161.4 L119.6 148.4 L122.6 168.6 L125.1 156.1 L127.5 173.5 L130.8 165.8 L134.2 180.2 L136.3 171.9 L138.5 184.5 L141.2 168.2 L143.9 187.8 L146.8 175.1 L149.6 190.5 L152.3 180.0 L155.1 193.0 L158.5 181.1 L161.9 196.2 L164.3 184.2 L166.6 198.4 L169.9 186.8 L170.0 200.0 L170.0 214.0 Z" fill="#050f24"/>
<path d="M205.0 214.0 L205.0 200.0 L207.5 181.6 L210.1 194.7 L212.7 176.6 L215.3 189.2 L217.9 168.6 L220.6 183.8 L223.0 163.6 L225.3 178.8 L227.4 163.0 L229.4 174.2 L231.9 159.1 L234.4 167.5 L237.5 149.6 L240.6 159.7 L243.8 136.8 L247.0 156.8 L249.4 135.0 L251.7 154.7 L254.9 135.2 L258.2 151.7 L260.2 135.3 L262.2 149.9 L265.2 135.3 L268.1 147.8 L270.5 133.3 L272.8 146.1 L275.2 125.8 L277.6 144.4 L280.1 128.5 L282.6 142.6 L285.6 120.2 L288.5 140.5 L291.0 129.1 L293.4 138.6 L296.9 117.3 L300.3 135.9 L303.5 118.3 L306.7 133.3 L309.1 120.5 L311.4 131.4 L313.9 114.9 L316.3 129.5 L318.4 110.2 L320.5 127.7 L323.6 115.7 L326.7 124.0 L330.0 106.1 L333.2 120.1 L336.6 102.3 L340.0 116.0 L343.2 98.6 L346.4 112.2 L349.3 94.4 L352.2 109.3 L354.3 96.9 L356.3 108.0 L358.6 92.4 L361.0 106.6 L363.5 89.3 L366.1 105.0 L369.1 89.2 L372.1 103.1 L374.5 86.2 L377.0 101.6 L380.5 81.1 L382.0 100.0 L382.0 214.0 Z" fill="#050e21"/>
<path d="M151.0 140.0 L151.9 147.4 L151.4 144.7 L152.8 152.2 L151.8 151.0 L153.7 159.4 L152.2 157.3 L153.8 164.2 L152.3 163.6 L154.8 170.6 L152.7 169.9 L154.9 177.4 L152.8 176.1 L156.7 185.2 L153.6 182.4 L152.5 184.0 L149.5 184.0 L148.4 182.4 L145.3 185.6 L149.2 176.1 L147.1 176.8 L149.3 169.9 L147.2 172.8 L149.7 163.6 L148.2 165.3 L149.8 157.3 L148.3 159.4 L150.2 151.0 L149.2 153.9 L150.6 144.7 L150.1 147.2 Z" fill="#081a3a"/>
<path d="M240.0 128.0 L241.3 134.5 L240.6 133.3 L242.3 141.8 L241.0 140.5 L242.8 149.4 L241.3 147.6 L243.0 158.4 L241.4 154.7 L244.2 165.4 L241.9 161.8 L245.4 171.9 L242.4 169.0 L246.0 178.6 L242.7 176.1 L245.2 186.5 L242.3 183.2 L241.5 185.0 L238.5 185.0 L237.7 183.2 L234.8 185.7 L237.3 176.1 L234.0 177.8 L237.6 169.0 L234.6 169.9 L238.1 161.8 L235.8 164.7 L238.6 154.7 L237.0 156.5 L238.7 147.6 L237.2 151.0 L239.0 140.5 L237.7 141.6 L239.4 133.3 L238.7 134.2 Z" fill="#081a3a"/>
<path d="M286.0 104.0 L287.4 113.2 L286.6 109.5 L287.7 119.4 L286.8 116.8 L288.9 125.4 L287.3 124.2 L289.5 133.0 L287.6 131.5 L289.5 139.9 L287.6 138.8 L290.8 148.5 L288.2 146.2 L291.3 154.5 L288.4 153.5 L292.4 163.6 L288.9 160.8 L294.0 170.1 L289.6 168.2 L287.5 170.0 L284.5 170.0 L282.4 168.2 L278.0 171.3 L283.1 160.8 L279.6 163.5 L283.6 153.5 L280.7 156.7 L283.8 146.2 L281.2 149.2 L284.4 138.8 L282.5 141.8 L284.4 131.5 L282.5 133.7 L284.7 124.2 L283.1 125.6 L285.2 116.8 L284.3 118.9 L285.4 109.5 L284.6 113.0 Z" fill="#06132b"/>
<path d="M332.0 68.0 L333.3 79.7 L332.6 75.7 L334.5 88.0 L333.1 85.9 L334.5 99.9 L333.1 96.0 L336.0 110.0 L333.8 106.2 L336.4 120.6 L334.0 116.5 L336.5 129.8 L334.0 126.6 L338.4 139.7 L334.9 136.8 L339.6 148.9 L335.4 147.0 L340.1 159.3 L335.6 157.2 L339.3 170.6 L335.3 167.4 L333.5 170.0 L330.5 170.0 L328.7 167.4 L324.7 170.1 L328.4 157.2 L323.9 159.8 L328.6 147.0 L324.4 150.9 L329.1 136.8 L325.6 139.3 L330.0 126.6 L327.5 131.1 L330.0 116.5 L327.6 121.0 L330.2 106.2 L328.0 110.1 L330.9 96.0 L329.5 98.1 L330.9 85.9 L329.5 89.4 L331.4 75.7 L330.7 77.7 Z" fill="#06132b"/>
<path d="M0 150 L60 156 L110 168 L140 178 L170 196 L188 203 L150 214 L0 214 Z" fill="#040d1f"/>
<path d="M382 160 L330 168 L280 176 L240 188 L200 197 L232 204 L250 214 L382 214 Z" fill="#050f22"/>
<path d="M112 176 L128 162 L140 170 L156 192 L110 192 Z" fill="#0a1d40"/>
<path d="M31.0 -4.0 L34.1 12.1 L32.4 8.6 L38.0 29.0 L34.1 25.3 L39.2 47.6 L34.7 42.1 L43.4 64.1 L36.6 58.9 L44.8 80.2 L37.2 75.7 L49.6 95.9 L39.4 92.4 L51.6 113.6 L40.3 109.2 L49.6 130.2 L39.4 126.0 L50.5 146.6 L39.8 142.7 L55.1 165.6 L41.9 159.5 L55.3 180.1 L41.9 176.3 L63.3 196.3 L45.5 193.0 L64.1 215.0 L45.9 209.8 L32.5 214.0 L29.5 214.0 L16.1 209.8 L-2.1 213.7 L16.5 193.0 L-1.3 198.4 L20.1 176.3 L6.7 182.0 L20.1 159.5 L6.9 165.2 L22.2 142.7 L11.5 147.7 L22.6 126.0 L12.4 132.0 L21.7 109.2 L10.4 113.0 L22.6 92.4 L12.4 95.7 L24.8 75.7 L17.2 80.1 L25.4 58.9 L18.6 62.5 L27.3 42.1 L22.8 45.7 L27.9 25.3 L24.0 28.9 L29.6 8.6 L27.9 12.9 Z" fill="#030a17"/>
<path d="M2.0 20.0 L4.5 40.3 L3.1 34.5 L6.0 59.8 L3.8 53.9 L8.8 77.8 L5.1 73.4 L9.8 98.1 L5.5 92.8 L11.1 117.3 L6.1 112.2 L12.9 136.3 L6.9 131.6 L13.7 155.0 L7.3 151.0 L16.2 175.5 L8.4 170.3 L18.5 195.3 L9.4 189.8 L15.5 213.2 L8.1 209.2 L3.5 214.0 L0.5 214.0 L-4.1 209.2 L-11.5 215.9 L-5.4 189.8 L-14.5 195.6 L-4.4 170.3 L-12.2 176.7 L-3.3 151.0 L-9.7 156.6 L-2.9 131.6 L-8.9 136.3 L-2.1 112.2 L-7.1 118.8 L-1.5 92.8 L-5.8 99.5 L-1.1 73.4 L-4.8 79.2 L0.2 53.9 L-2.0 60.5 L0.9 34.5 L-0.5 40.9 Z" fill="#030a17"/>
<path d="M374.0 -30.0 L378.3 -11.6 L375.9 -15.9 L384.0 8.0 L378.5 2.8 L384.3 26.8 L378.7 21.6 L389.3 46.9 L380.9 40.4 L391.3 62.8 L381.8 59.2 L392.2 81.6 L382.2 77.9 L400.7 102.9 L386.0 96.7 L397.6 119.4 L384.6 115.5 L408.0 138.3 L389.3 134.2 L400.2 156.8 L385.8 153.0 L406.3 176.0 L388.5 171.8 L416.2 194.7 L393.0 190.5 L416.3 214.7 L393.1 209.3 L375.5 214.0 L372.5 214.0 L354.9 209.3 L331.7 214.7 L355.0 190.5 L331.8 196.7 L359.5 171.8 L341.7 176.4 L362.2 153.0 L347.8 156.8 L358.7 134.2 L340.0 138.4 L363.4 115.5 L350.4 119.5 L362.0 96.7 L347.3 103.2 L365.8 77.9 L355.8 83.8 L366.2 59.2 L356.7 65.1 L367.1 40.4 L358.7 46.7 L369.3 21.6 L363.7 27.8 L369.5 2.8 L364.0 8.7 L372.1 -15.9 L369.7 -11.3 Z" fill="#030a17"/>
<rect width="382" height="214" fill="url(#vig)"/>
<g fill="#9fbfe8" opacity=".7"><circle cx="226.9" cy="41.6" r=".45"/><circle cx="278.6" cy="52.0" r=".45"/><circle cx="262.0" cy="51.0" r=".45"/><circle cx="48.7" cy="27.2" r=".45"/><circle cx="323.0" cy="36.7" r=".45"/><circle cx="310.3" cy="8.9" r=".45"/><circle cx="180.7" cy="15.8" r=".45"/><circle cx="203.1" cy="32.8" r=".45"/><circle cx="43.9" cy="14.3" r=".45"/><circle cx="123.8" cy="50.6" r=".45"/><circle cx="269.7" cy="11.3" r=".45"/><circle cx="279.1" cy="10.2" r=".45"/><circle cx="225.2" cy="9.6" r=".45"/><circle cx="40.5" cy="48.3" r=".45"/><circle cx="102.8" cy="14.2" r=".45"/><circle cx="334.7" cy="48.4" r=".45"/><circle cx="126.8" cy="53.0" r=".45"/><circle cx="201.8" cy="38.2" r=".45"/><circle cx="101.4" cy="51.9" r=".45"/><circle cx="247.2" cy="53.3" r=".45"/><circle cx="308.1" cy="18.5" r=".45"/><circle cx="148.4" cy="11.6" r=".45"/></g>
<path d="M0 155.3 L290 155.3" stroke="#c8b04a" stroke-width=".9" stroke-dasharray="1.6 1.6" fill="none"/>
<path d="M290.3 0 L290.3 155" stroke="#b9a85a" stroke-width=".8" stroke-dasharray="1.4 1.8" fill="none" opacity=".8"/>
<path d="M273 155.3 L308 155.3 M290.3 137 L290.3 173" stroke="#d4a60e" stroke-width="1.8" fill="none"/>
<circle cx="276.5" cy="168" r="11" fill="#3b4a5a" fill-opacity=".45" stroke="#d8d2b8" stroke-width="1"/><path d="M266 168 L287 168 M276.5 157.5 L276.5 178.5" stroke="#c9a21a" stroke-width=".8"/>
<rect x="268" y="180" width="18" height="5" fill="#0a1428"/><rect x="271" y="181.6" width="12" height="1.6" fill="#cfd6e0"/>
</svg>
        <div class="dur">0:15</div>
      </div>
      <div class="title">Test</div><div class="dots"><i style="top:0"></i><i style="top:7px"></i><i style="top:14px"></i></div>
      <div class="owner" style="left:21px">Peter Tea</div>
    </div>
    <!-- Card 2 -->
    <div class="card" style="left:540.300px;top:160px">
      <div class="q" style="left:4.500px;top:4px;background:#fff">
        <div class="abs" style="left:12px;top:14px;width:10px;height:10px;border-radius:0 0 0 10px;background:#d9d9d9"></div>
        <div class="abs" style="left:28px;top:13.500px;font-size:7.400px;line-height:10px;font-weight:bold;color:#2a2a2a;white-space:nowrap;letter-spacing:-.05px">Math for Elementary Teachers (MET)</div>
        <div class="tt" style="left:28px;top:41.2px;width:128px;font-size:3.050px;line-height:4.600px;color:#3c3c3c;text-align:justify;text-align-last:justify">The level of depth and expectations for the courses are often varied by institution and</div><div class="tt" style="left:28px;top:45.8px;width:130px;font-size:3.050px;line-height:4.600px;color:#3c3c3c;text-align:justify;text-align-last:justify">instructor. The Conference Board of Mathematical Sciences, an umbrella group with 16</div><div class="tt" style="left:28px;top:50.4px;width:131px;font-size:3.050px;line-height:4.600px;color:#3c3c3c;text-align:justify;text-align-last:justify">professional institutions beneath it including NCTM, AMTE, and AMATYC published the</div><div class="tt" style="left:28px;top:55.0px;width:98px;font-size:3.050px;line-height:4.600px;color:#3c3c3c;text-align:justify;text-align-last:justify">Mathematical Education of Teachers in 2001 and revised in 2012.</div>
        
        <div class="abs" style="left:155px;top:0;width:30px;height:18px;background:#3c4a4e"><div class="abs" style="left:11px;top:4px;width:8px;height:9px;border-radius:4px;background:#d9b39b"></div><div class="abs" style="left:6px;top:13px;width:18px;height:5px;background:#2b3133"></div><div class="abs" style="left:0;top:0;width:9px;height:11px;background:#6d7c7f"></div></div>
        <div class="abs" style="left:161px;top:100px;width:23px;height:3px;background:#555;border-radius:1px"></div>
      </div>
      <div class="q" style="left:193.500px;top:4px;background:#000">
        <div class="abs" style="left:15px;top:9px;width:154px;height:87px;background:#fff"></div>
        <div class="abs" style="left:15px;top:9px;width:52px;height:87px;background:#404040"></div>
        <svg class="abs" style="left:58px;top:9px" width="32" height="87" viewBox="0 0 32 87"><path d="M9 0 L16 0 L6 62 L22 87 L0 87 L0 0 Z" fill="#404040"/><path d="M11 0 L13 0 L3 62 L19 87 L17 87 L1 62 Z" fill="#fff"/><path d="M16 0 L20 0 L10 61 L28 87 L22 87 L6 62 Z" fill="#2f5fc4"/><path d="M14 0 L15 0 L5 62 L21 87 L20 87 L4 62 Z" fill="#111"/></svg>
        <div class="abs" style="left:18px;top:46px;font-size:5.6px;line-height:8px;color:#fff;font-weight:bold;letter-spacing:-.1px">Understandable</div>
        <div class="abs" style="left:81px;top:13px;width:84px;height:12px;background:#ed7d31;border-radius:1px"></div>
        <div class="abs" style="left:81px;top:32px;width:84px;height:12px;background:#a5a5a5;border-radius:1px"></div>
        <div class="abs" style="left:81px;top:51px;width:84px;height:12px;background:#ffc000;border-radius:1px"></div>
        <div class="abs" style="left:81px;top:70px;width:84px;height:17px;background:#5b9bd5;border-radius:1px"></div>
        <div class="tt" style="left:97px;top:15.5px;font-size:2.550px;line-height:3.400px;color:#fff;font-weight:bold;white-space:nowrap">“Understandable” brings the conversation into<br>the realm of usability and effective equity</div><div class="tt" style="left:97px;top:34.5px;font-size:2.550px;line-height:3.400px;color:#fff;font-weight:bold;white-space:nowrap">Meaningful – clear, thoughtful and<br>understandable content</div><div class="tt" style="left:97px;top:53.5px;font-size:2.550px;line-height:3.400px;color:#fff;font-weight:bold;white-space:nowrap">Language – effective grammar, punctuation,<br>appropriate word choice</div><div class="tt" style="left:97px;top:71.6px;font-size:2.550px;line-height:3.400px;color:#fff;font-weight:bold;white-space:nowrap">Illustrations, animations, video, and other<br>interactive content as TRULY SUPPLEMENTAL to<br>a high quality text version of the same<br>information</div><div class="abs" style="left:85px;top:16px;width:5px;height:5px;background:#fbe0cc;box-shadow:0 19px 0 #e8e8e8,0 38px 0 #fff4cc,0 59px 0 #dcebf8;border-radius:1px"></div>
        <div class="abs" style="left:154px;top:0;width:31px;height:12px;background:#7b5a48"><div class="abs" style="left:14px;top:1px;width:9px;height:9px;border-radius:4px;background:#e0b9a2"></div><div class="abs" style="left:10px;top:8px;width:21px;height:4px;background:#3d5f9a"></div><div class="abs" style="left:0;top:0;width:12px;height:12px;background:#5d4436"></div></div>
      </div>
      <div class="q" style="left:4.500px;top:112px"></div>
      <div class="q" style="left:193.500px;top:112px"></div>
      <div class="title">Videos</div><div class="dots" style="left:352px"><i style="top:0"></i><i style="top:7px"></i><i style="top:14px"></i></div>
      <div class="owner" style="left:12px">Peter Tea</div>
    </div>
    <!-- Card 3 -->
    <div class="card" style="left:947.400px;top:160px">
      <div class="thumb" style="background:linear-gradient(180deg,#f6fdfb 0%,#dff6f0 10%,#c2eee3 25%,#98e4d3 48%,#6cdac2 72%,#42cfae 100%)">
        <div class="abs" style="left:264.600px;top:7px;width:109.400px;height:33px;border-radius:7px;background:#3dd2ae"></div>
        <svg class="abs" style="left:268px;top:13px" width="24" height="20" viewBox="0 0 27 23"><path d="M13.500 0.600 C20.800 0.600 26.400 4.600 26.400 9.800 C26.400 15 20.800 19 13.500 19 C12.200 19 11 18.900 9.900 18.600 L6.200 22.600 L6.600 17.400 C3 15.800 0.600 13 0.600 9.800 C0.600 4.600 6.200 0.600 13.500 0.600 Z" fill="#fff"/><path d="M7 9.800 L18 9.800" stroke="#3dd2ae" stroke-width="1.200"/><circle cx="7.400" cy="9.800" r="1.400" fill="#3dd2ae"/><circle cx="12.600" cy="9.800" r="1.900" fill="#3dd2ae"/><circle cx="18.800" cy="9.800" r="2.500" fill="#3dd2ae"/></svg>
        <div class="abs" style="left:296px;top:5px;font-size:24.500px;line-height:30px;font-weight:bold;color:#fff;letter-spacing:.4px">pr</div>
        <div class="abs" style="left:320.600px;top:0;width:61.400px;height:34px;background:#d4d2d3;overflow:hidden">
          <div class="abs" style="left:0;top:0;width:4px;height:34px;background:#b6b2b2"></div>
          <div class="abs" style="left:14.600px;top:10.500px;width:9.500px;height:8.700px;background:#2a2a28"></div>
          <div class="abs" style="left:16.200px;top:12.300px;width:6.300px;height:5px;background:#9a9a88"></div>
          <div class="abs" style="left:28px;top:6.800px;width:14px;height:22px;border-radius:7px 7px 6px 6px;background:#b98c7a"></div>
          <div class="abs" style="left:28px;top:6.500px;width:14px;height:6px;border-radius:7px 7px 0 0;background:#aaa29c"></div>
          <div class="abs" style="left:21px;top:23.500px;width:35px;height:16px;border-radius:14px 12px 0 0;background:#2b4b9c"></div>
          <div class="abs" style="left:31px;top:22.500px;width:9px;height:6px;border-radius:0 0 5px 5px;background:#b98c7a"></div>
          <div class="abs" style="left:0;top:29.200px;width:13.700px;height:4.800px;background:#6c6c6c"></div>
          <div class="tt" style="left:1px;top:29.400px;font-size:2.700px;line-height:4.800px;color:#e4e4e4">Eric Miller</div>
        </div>
        <div class="abs vt" style="left:10px;top:30px;font-size:27px;line-height:32px;-webkit-text-stroke:1.5px #2a2a2a;paint-order:stroke fill;color:#f4fbf9;letter-spacing:-.1px">Value</div>
        <div class="abs vb" style="left:38px;top:61.500px">Development of English functional<br>language for collaborating in teams and<br>negotiating working times<br>Interaction outside of synchronous meetings<br>times<br>Provides instructor with better opportunity<br>to assess spoken language</div>
        <div class="abs" style="left:12px;top:69px;width:4px;height:4px;border-radius:50%;border:1px solid #444;background:#e8f8f4"></div><div class="abs" style="left:12px;top:126px;width:4px;height:4px;border-radius:50%;border:1px solid #444;background:#e8f8f4"></div><div class="abs" style="left:12px;top:164px;width:4px;height:4px;border-radius:50%;border:1px solid #444;background:#e8f8f4"></div>
        <div class="dur" style="background:rgba(8,30,24,.9)">53:39</div>
      </div>
      <div class="title" style="left:13px;top:230px;letter-spacing:-.42px">Using_Pronto_to_Level_Up_Student_Engagem<br><span style="letter-spacing:-.2px">ent_Communication__Collaboration_in_Your...</span></div><div class="dots" style="left:352px"><i style="top:0"></i><i style="top:7px"></i><i style="top:14px"></i></div>
      <div class="owner" style="left:22px">Peter Tea</div>
    </div>
    <!-- Card 4 -->
    <div class="card r2" style="left:134px;top:509.700px">
      <div class="thumb" style="background:#000">
        <div class="abs" style="left:0;top:0;width:321px;height:9px;background:#141c26"></div>
        <div class="abs" style="left:0;top:9px;width:321px;height:8px;background:#1d2733"></div>
        <div class="abs" style="left:14px;top:1px;width:46px;height:8px;background:#1f2a38;border-radius:2px 2px 0 0"></div>
        <div class="abs" style="left:112px;top:1px;width:48px;height:8px;background:#26384e;border-radius:2px 2px 0 0"></div>
        <div class="abs" style="left:2px;top:3px;width:2px;height:2px;border-radius:50%;background:#e55;box-shadow:4px 0 0 #eb3,8px 0 0 #4c4"></div>
        <div class="tt" style="left:21px;top:1.500px;width:34px;font-size:3.100px;line-height:6px;color:#b8c0ca">PlayPosit Introductory Traini</div><div class="tt" style="left:70px;top:1.500px;width:34px;font-size:3.100px;line-height:6px;color:#b8c0ca">Create Assignment</div><div class="tt" style="left:119px;top:1.500px;width:36px;font-size:3.100px;line-height:6px;color:#dfe5ec">PlayPosit Interactive Sub-Do</div><div class="abs" style="left:16px;top:3px;width:3px;height:3px;background:#e8c040;border-radius:1px"></div><div class="abs" style="left:65px;top:3px;width:3px;height:3px;border-radius:50%;border:.6px solid #e04a3a"></div><div class="abs" style="left:114px;top:3px;width:3px;height:3px;background:#2a7ae0;border-radius:1px"></div>
        <div class="tt" style="left:22px;top:9.500px;font-size:3.200px;line-height:7px;color:#8a94a0"><span style="color:#d8dee6">api.playposit.com</span>/designer/?hub_id=18419428&amp;no_launch=true</div>
        <div class="abs" style="left:262px;top:11px;width:3px;height:3px;background:#bba36a;box-shadow:8px 0 0 #e0c04a,16px 0 0 #2f8fe0,24px 0 0 #38c0a0,32px 0 0 #ddd,40px 0 0 #999,46px 0 0 #e08a3a"></div>
        <div class="abs" style="left:0;top:17px;width:7px;height:197px;background:#0f3b41"></div>
        <div class="abs" style="left:7px;top:17px;width:157px;height:197px;background:#656565"></div>
        <div class="abs" style="left:14px;top:24px;width:143px;height:9px;background:#727272;border-radius:2px 2px 0 0"></div>
        <div class="abs" style="left:14px;top:33px;width:143px;height:96px;background:#fff;border-radius:0 0 2px 2px"></div>
        <div class="abs" style="left:14px;top:50px;width:143px;height:1px;background:#d8d8d8"></div>
        <div class="abs" style="left:18px;top:39px;width:5px;height:5px;border-radius:50%;background:#1f88e5;box-shadow:59px 0 0 #8a8a8a,117px 0 0 #8a8a8a"></div>
        <div class="tt" style="left:25px;top:37px;font-size:3.200px;line-height:4.500px;color:#222;font-weight:bold">Interaction</div><div class="tt" style="left:84px;top:37px;font-size:3.200px;line-height:4.500px;color:#9a9a9a">Placement</div><div class="tt" style="left:142px;top:37px;font-size:3.200px;line-height:4.500px;color:#9a9a9a">Timing</div>
        <div class="tt" style="left:29px;top:41.200px;font-size:2.700px;line-height:4px;color:#444">Pause</div><div class="tt" style="left:88px;top:41.200px;font-size:2.700px;line-height:4px;color:#b0b0b0">Sidebar</div><div class="tt" style="left:144px;top:41.200px;font-size:2.700px;line-height:4px;color:#b0b0b0">00:01</div>
        <div class="abs" style="left:52px;top:55px;width:66px;height:12px;background:#f0f0f0"></div>
        <div class="tt" style="left:54.500px;top:58px;font-size:3.200px;line-height:5px;color:#555">Pause</div><div class="abs" style="left:115px;top:60px;width:0;height:0;border-left:1px solid transparent;border-right:1px solid transparent;border-top:1.500px solid #444"></div>
        <div class="tt" style="left:18px;top:69.500px;width:120px;font-size:3.350px;line-height:5.300px;color:#222;text-align:justify;text-align-last:justify">This lesson is designed for you to reflect on your understanding of mistakes.</div><div class="tt" style="left:18px;top:74.800px;width:125px;font-size:3.350px;line-height:5.300px;color:#222;text-align:justify;text-align-last:justify">Listen to the speaker, Stanford mathematics education professor Joe Boaler and</div><div class="tt" style="left:18px;top:80.100px;width:46px;font-size:3.350px;line-height:5.300px;color:#222;text-align:justify;text-align-last:justify">engage with the interactions.</div><div class="tt" style="left:18px;top:85.400px;width:78px;font-size:3.350px;line-height:5.300px;color:#222;text-align:justify;text-align-last:justify">Press Play or Continue when you're ready to begin.</div>
        
        
        <div class="abs" style="left:18px;top:90.5px;width:134px;height:.8px;background:#bbb"></div>
        <div class="tt" style="left:18px;top:92.200px;font-size:2.900px;line-height:4.500px;color:#666;text-decoration:underline">Advanced</div>
        <div class="abs" style="left:19px;top:99px;width:4px;height:4px;background:#1f78d8;box-shadow:0 5.6px 0 #1f78d8,0 11.2px 0 #1f78d8"></div>
        <div class="tt" style="left:25px;top:100px;font-size:2.600px;line-height:4.400px;color:#8a8a8a">Interaction is required</div><div class="tt" style="left:25px;top:105.600px;font-size:2.600px;line-height:4.400px;color:#8a8a8a">Interaction pauses video playback</div><div class="tt" style="left:25px;top:111.200px;font-size:2.600px;line-height:4.400px;color:#8a8a8a">Learners can rewind after reaching this interaction</div>
        <div class="tt" style="left:20px;top:121px;font-size:2.900px;line-height:5px;color:#444;font-weight:bold;letter-spacing:.1px">CANCEL</div><div class="tt" style="left:116px;top:121px;font-size:2.700px;line-height:5px;color:#fff;font-weight:bold">DONE</div><div class="tt" style="left:133px;top:121px;font-size:2.700px;line-height:5px;color:#4a9ae8;font-weight:bold">CUSTOMIZE</div>
        <div class="abs" style="left:113px;top:120px;width:15px;height:7px;background:#1f88e5;border-radius:1px"></div>
        <div class="abs" style="left:130px;top:120px;width:24px;height:7px;border:1px solid #9cc7f0;border-radius:1px"></div>
        <!-- video still -->
        <div class="abs" style="left:164px;top:72px;width:157px;height:88px;overflow:hidden;background:linear-gradient(180deg,#7a2417 0%,#b0452a 22%,#c4633a 45%,#9c4a2a 62%,#5a3020 100%)">
          <svg class="abs" style="left:0;top:0" width="157" height="56" viewBox="0 0 157 56"><defs><linearGradient id="cbg" x1="0" y1="0" x2="0" y2="1"><stop offset="0" stop-color="#5a1c12"/><stop offset=".35" stop-color="#9a3a22"/><stop offset=".7" stop-color="#b4582e"/><stop offset="1" stop-color="#7a5226"/></linearGradient><filter id="cbl" x="-5%" y="-5%" width="110%" height="110%"><feGaussianBlur stdDeviation=".85"/></filter></defs><rect width="157" height="56" fill="url(#cbg)"/><g filter="url(#cbl)"><ellipse cx="14" cy="14" rx="16" ry="10" fill="#d8384a" opacity="0.55"/><ellipse cx="40" cy="8" rx="14" ry="7" fill="#c8442e" opacity="0.5"/><ellipse cx="70" cy="12" rx="18" ry="8" fill="#d8683a" opacity="0.45"/><ellipse cx="110" cy="10" rx="20" ry="8" fill="#c04a2a" opacity="0.5"/><ellipse cx="145" cy="14" rx="14" ry="9" fill="#d86038" opacity="0.5"/><ellipse cx="88" cy="30" rx="26" ry="12" fill="#e89858" opacity="0.45"/><ellipse cx="30" cy="34" rx="20" ry="10" fill="#d05a34" opacity="0.4"/><ellipse cx="132" cy="34" rx="18" ry="10" fill="#d8703c" opacity="0.4"/><path d="M71.0 52.7 L83.0 22.8" stroke="#e09a5a" stroke-width="2.6" stroke-linecap="round"/><path d="M83.0 22.8 L82.5 18.3" stroke="#e8b070" stroke-width="1.100" stroke-linecap="round"/><path d="M83.0 22.8 L83.9 18.4" stroke="#e8b070" stroke-width="1.100" stroke-linecap="round"/><path d="M83.0 22.8 L85.1 18.8" stroke="#e8b070" stroke-width="1.100" stroke-linecap="round"/><path d="M83.0 22.8 L86.2 19.6" stroke="#e8b070" stroke-width="1.100" stroke-linecap="round"/><path d="M74.7 53.4 L65.8 22.8" stroke="#b8522c" stroke-width="2.4" stroke-linecap="round"/><path d="M65.8 22.8 L62.7 19.6" stroke="#e0905a" stroke-width="1.100" stroke-linecap="round"/><path d="M65.8 22.8 L63.7 18.8" stroke="#e0905a" stroke-width="1.100" stroke-linecap="round"/><path d="M65.8 22.8 L65.0 18.4" stroke="#e0905a" stroke-width="1.100" stroke-linecap="round"/><path d="M65.8 22.8 L66.4 18.3" stroke="#e0905a" stroke-width="1.100" stroke-linecap="round"/><path d="M93.5 50.8 L91.9 12.5" stroke="#b8522c" stroke-width="3.4" stroke-linecap="round"/><path d="M91.9 12.5 L89.5 8.7" stroke="#e8b070" stroke-width="1.100" stroke-linecap="round"/><path d="M91.9 12.5 L90.8 8.2" stroke="#e8b070" stroke-width="1.100" stroke-linecap="round"/><path d="M91.9 12.5 L92.1 8.0" stroke="#e8b070" stroke-width="1.100" stroke-linecap="round"/><path d="M91.9 12.5 L93.4 8.3" stroke="#e8b070" stroke-width="1.100" stroke-linecap="round"/><path d="M9.9 46.4 L21.7 13.3" stroke="#b05a30" stroke-width="2.9" stroke-linecap="round"/><path d="M21.7 13.3 L21.0 8.8" stroke="#e8b070" stroke-width="1.100" stroke-linecap="round"/><path d="M21.7 13.3 L22.3 8.8" stroke="#e8b070" stroke-width="1.100" stroke-linecap="round"/><path d="M21.7 13.3 L23.6 9.2" stroke="#e8b070" stroke-width="1.100" stroke-linecap="round"/><path d="M21.7 13.3 L24.7 10.0" stroke="#e8b070" stroke-width="1.100" stroke-linecap="round"/><path d="M132.3 52.2 L136.4 19.5" stroke="#d98848" stroke-width="3.1" stroke-linecap="round"/><path d="M136.4 19.5 L134.8 15.3" stroke="#e84a5a" stroke-width="1.100" stroke-linecap="round"/><path d="M136.4 19.5 L136.1 15.0" stroke="#e84a5a" stroke-width="1.100" stroke-linecap="round"/><path d="M136.4 19.5 L137.4 15.1" stroke="#e84a5a" stroke-width="1.100" stroke-linecap="round"/><path d="M136.4 19.5 L138.7 15.6" stroke="#e84a5a" stroke-width="1.100" stroke-linecap="round"/><path d="M63.9 52.6 L72.9 30.6" stroke="#a84828" stroke-width="2.8" stroke-linecap="round"/><path d="M72.9 30.6 L72.4 26.1" stroke="#d8784a" stroke-width="1.100" stroke-linecap="round"/><path d="M72.9 30.6 L73.7 26.1" stroke="#d8784a" stroke-width="1.100" stroke-linecap="round"/><path d="M72.9 30.6 L75.0 26.6" stroke="#d8784a" stroke-width="1.100" stroke-linecap="round"/><path d="M72.9 30.6 L76.1 27.4" stroke="#d8784a" stroke-width="1.100" stroke-linecap="round"/><path d="M80.5 46.4 L81.9 22.0" stroke="#d98848" stroke-width="3.9" stroke-linecap="round"/><path d="M81.9 22.0 L80.0 18.0" stroke="#c8602e" stroke-width="1.100" stroke-linecap="round"/><path d="M81.9 22.0 L81.3 17.6" stroke="#c8602e" stroke-width="1.100" stroke-linecap="round"/><path d="M81.9 22.0 L82.6 17.6" stroke="#c8602e" stroke-width="1.100" stroke-linecap="round"/><path d="M81.9 22.0 L83.9 18.0" stroke="#c8602e" stroke-width="1.100" stroke-linecap="round"/><path d="M10.5 46.2 L14.9 19.9" stroke="#c86a38" stroke-width="3.1" stroke-linecap="round"/><path d="M14.9 19.9 L13.4 15.6" stroke="#c8602e" stroke-width="1.100" stroke-linecap="round"/><path d="M14.9 19.9 L14.8 15.4" stroke="#c8602e" stroke-width="1.100" stroke-linecap="round"/><path d="M14.9 19.9 L16.1 15.5" stroke="#c8602e" stroke-width="1.100" stroke-linecap="round"/><path d="M14.9 19.9 L17.3 16.1" stroke="#c8602e" stroke-width="1.100" stroke-linecap="round"/><path d="M65.9 52.8 L56.0 17.3" stroke="#d07840" stroke-width="2.4" stroke-linecap="round"/><path d="M56.0 17.3 L52.9 14.1" stroke="#e84a5a" stroke-width="1.100" stroke-linecap="round"/><path d="M56.0 17.3 L54.0 13.3" stroke="#e84a5a" stroke-width="1.100" stroke-linecap="round"/><path d="M56.0 17.3 L55.3 12.9" stroke="#e84a5a" stroke-width="1.100" stroke-linecap="round"/><path d="M56.0 17.3 L56.6 12.8" stroke="#e84a5a" stroke-width="1.100" stroke-linecap="round"/><path d="M2.4 50.9 L11.7 27.7" stroke="#d98848" stroke-width="2.2" stroke-linecap="round"/><path d="M11.7 27.7 L11.1 23.3" stroke="#c8602e" stroke-width="1.100" stroke-linecap="round"/><path d="M11.7 27.7 L12.5 23.3" stroke="#c8602e" stroke-width="1.100" stroke-linecap="round"/><path d="M11.7 27.7 L13.7 23.8" stroke="#c8602e" stroke-width="1.100" stroke-linecap="round"/><path d="M11.7 27.7 L14.8 24.5" stroke="#c8602e" stroke-width="1.100" stroke-linecap="round"/><path d="M125.1 48.1 L126.8 16.3" stroke="#e09a5a" stroke-width="4.2" stroke-linecap="round"/><path d="M126.8 16.3 L124.9 12.3" stroke="#d8784a" stroke-width="1.100" stroke-linecap="round"/><path d="M126.8 16.3 L126.2 11.9" stroke="#d8784a" stroke-width="1.100" stroke-linecap="round"/><path d="M126.8 16.3 L127.5 11.9" stroke="#d8784a" stroke-width="1.100" stroke-linecap="round"/><path d="M126.8 16.3 L128.8 12.3" stroke="#d8784a" stroke-width="1.100" stroke-linecap="round"/><path d="M65.8 50.6 L61.7 7.0" stroke="#c86a38" stroke-width="2.7" stroke-linecap="round"/><path d="M61.7 7.0 L59.2 3.3" stroke="#e8b070" stroke-width="1.100" stroke-linecap="round"/><path d="M61.7 7.0 L60.4 2.7" stroke="#e8b070" stroke-width="1.100" stroke-linecap="round"/><path d="M61.7 7.0 L61.7 2.5" stroke="#e8b070" stroke-width="1.100" stroke-linecap="round"/><path d="M61.7 7.0 L63.0 2.7" stroke="#e8b070" stroke-width="1.100" stroke-linecap="round"/><path d="M47.8 56.6 L39.9 27.0" stroke="#d98848" stroke-width="2.3" stroke-linecap="round"/><path d="M39.9 27.0 L36.8 23.7" stroke="#d8784a" stroke-width="1.100" stroke-linecap="round"/><path d="M39.9 27.0 L37.9 22.9" stroke="#d8784a" stroke-width="1.100" stroke-linecap="round"/><path d="M39.9 27.0 L39.1 22.5" stroke="#d8784a" stroke-width="1.100" stroke-linecap="round"/><path d="M39.9 27.0 L40.5 22.5" stroke="#d8784a" stroke-width="1.100" stroke-linecap="round"/><path d="M33.5 49.1 L40.6 20.7" stroke="#a84828" stroke-width="3.0" stroke-linecap="round"/><path d="M40.6 20.7 L39.4 16.4" stroke="#e0905a" stroke-width="1.100" stroke-linecap="round"/><path d="M40.6 20.7 L40.8 16.2" stroke="#e0905a" stroke-width="1.100" stroke-linecap="round"/><path d="M40.6 20.7 L42.1 16.5" stroke="#e0905a" stroke-width="1.100" stroke-linecap="round"/><path d="M40.6 20.7 L43.3 17.1" stroke="#e0905a" stroke-width="1.100" stroke-linecap="round"/><path d="M14.1 53.0 L6.1 18.7" stroke="#d07840" stroke-width="3.4" stroke-linecap="round"/><path d="M6.1 18.7 L3.1 15.4" stroke="#d8784a" stroke-width="1.100" stroke-linecap="round"/><path d="M6.1 18.7 L4.2 14.6" stroke="#d8784a" stroke-width="1.100" stroke-linecap="round"/><path d="M6.1 18.7 L5.5 14.2" stroke="#d8784a" stroke-width="1.100" stroke-linecap="round"/><path d="M6.1 18.7 L6.8 14.3" stroke="#d8784a" stroke-width="1.100" stroke-linecap="round"/><path d="M150.6 51.8 L153.3 10.8" stroke="#b8522c" stroke-width="3.5" stroke-linecap="round"/><path d="M153.3 10.8 L151.5 6.7" stroke="#e84a5a" stroke-width="1.100" stroke-linecap="round"/><path d="M153.3 10.8 L152.7 6.4" stroke="#e84a5a" stroke-width="1.100" stroke-linecap="round"/><path d="M153.3 10.8 L154.1 6.4" stroke="#e84a5a" stroke-width="1.100" stroke-linecap="round"/><path d="M153.3 10.8 L155.4 6.8" stroke="#e84a5a" stroke-width="1.100" stroke-linecap="round"/><path d="M142.6 55.8 L136.8 30.3" stroke="#e09a5a" stroke-width="3.6" stroke-linecap="round"/><path d="M136.8 30.3 L133.8 26.9" stroke="#c8602e" stroke-width="1.100" stroke-linecap="round"/><path d="M136.8 30.3 L134.9 26.2" stroke="#c8602e" stroke-width="1.100" stroke-linecap="round"/><path d="M136.8 30.3 L136.2 25.8" stroke="#c8602e" stroke-width="1.100" stroke-linecap="round"/><path d="M136.8 30.3 L137.6 25.9" stroke="#c8602e" stroke-width="1.100" stroke-linecap="round"/><path d="M138.5 53.2 L136.8 29.0" stroke="#c86a38" stroke-width="3.2" stroke-linecap="round"/><path d="M136.8 29.0 L134.4 25.2" stroke="#e84a5a" stroke-width="1.100" stroke-linecap="round"/><path d="M136.8 29.0 L135.6 24.7" stroke="#e84a5a" stroke-width="1.100" stroke-linecap="round"/><path d="M136.8 29.0 L136.9 24.5" stroke="#e84a5a" stroke-width="1.100" stroke-linecap="round"/><path d="M136.8 29.0 L138.2 24.8" stroke="#e84a5a" stroke-width="1.100" stroke-linecap="round"/><path d="M37.4 54.5 L28.7 15.3" stroke="#b05a30" stroke-width="2.8" stroke-linecap="round"/><path d="M28.7 15.3 L25.8 11.9" stroke="#d8784a" stroke-width="1.100" stroke-linecap="round"/><path d="M28.7 15.3 L26.9 11.2" stroke="#d8784a" stroke-width="1.100" stroke-linecap="round"/><path d="M28.7 15.3 L28.2 10.8" stroke="#d8784a" stroke-width="1.100" stroke-linecap="round"/><path d="M28.7 15.3 L29.5 10.9" stroke="#d8784a" stroke-width="1.100" stroke-linecap="round"/><path d="M145.9 57.7 L135.2 27.0" stroke="#d98848" stroke-width="2.8" stroke-linecap="round"/><path d="M135.2 27.0 L131.8 24.0" stroke="#d8784a" stroke-width="1.100" stroke-linecap="round"/><path d="M135.2 27.0 L132.9 23.1" stroke="#d8784a" stroke-width="1.100" stroke-linecap="round"/><path d="M135.2 27.0 L134.1 22.6" stroke="#d8784a" stroke-width="1.100" stroke-linecap="round"/><path d="M135.2 27.0 L135.4 22.5" stroke="#d8784a" stroke-width="1.100" stroke-linecap="round"/><path d="M117.6 46.8 L115.4 19.4" stroke="#c86a38" stroke-width="2.6" stroke-linecap="round"/><path d="M115.4 19.4 L112.9 15.7" stroke="#e84a5a" stroke-width="1.100" stroke-linecap="round"/><path d="M115.4 19.4 L114.2 15.1" stroke="#e84a5a" stroke-width="1.100" stroke-linecap="round"/><path d="M115.4 19.4 L115.5 14.9" stroke="#e84a5a" stroke-width="1.100" stroke-linecap="round"/><path d="M115.4 19.4 L116.8 15.2" stroke="#e84a5a" stroke-width="1.100" stroke-linecap="round"/><path d="M83.4 57.7 L74.4 34.3" stroke="#b05a30" stroke-width="4.2" stroke-linecap="round"/><path d="M74.4 34.3 L70.9 31.4" stroke="#e8b070" stroke-width="1.100" stroke-linecap="round"/><path d="M74.4 34.3 L72.0 30.5" stroke="#e8b070" stroke-width="1.100" stroke-linecap="round"/><path d="M74.4 34.3 L73.2 30.0" stroke="#e8b070" stroke-width="1.100" stroke-linecap="round"/><path d="M74.4 34.3 L74.5 29.8" stroke="#e8b070" stroke-width="1.100" stroke-linecap="round"/><path d="M91.8 47.7 L82.7 27.2" stroke="#d07840" stroke-width="3.6" stroke-linecap="round"/><path d="M82.7 27.2 L79.1 24.5" stroke="#e0905a" stroke-width="1.100" stroke-linecap="round"/><path d="M82.7 27.2 L80.0 23.6" stroke="#e0905a" stroke-width="1.100" stroke-linecap="round"/><path d="M82.7 27.2 L81.2 22.9" stroke="#e0905a" stroke-width="1.100" stroke-linecap="round"/><path d="M82.7 27.2 L82.6 22.7" stroke="#e0905a" stroke-width="1.100" stroke-linecap="round"/><path d="M3.3 53.6 L2.7 15.6" stroke="#d07840" stroke-width="2.5" stroke-linecap="round"/><path d="M2.7 15.6 L0.5 11.7" stroke="#e0905a" stroke-width="1.100" stroke-linecap="round"/><path d="M2.7 15.6 L1.8 11.2" stroke="#e0905a" stroke-width="1.100" stroke-linecap="round"/><path d="M2.7 15.6 L3.1 11.1" stroke="#e0905a" stroke-width="1.100" stroke-linecap="round"/><path d="M2.7 15.6 L4.4 11.4" stroke="#e0905a" stroke-width="1.100" stroke-linecap="round"/><path d="M11.8 52.6 L20.7 11.7" stroke="#b8522c" stroke-width="3.8" stroke-linecap="round"/><path d="M20.7 11.7 L19.4 7.4" stroke="#e84a5a" stroke-width="1.100" stroke-linecap="round"/><path d="M20.7 11.7 L20.7 7.2" stroke="#e84a5a" stroke-width="1.100" stroke-linecap="round"/><path d="M20.7 11.7 L22.1 7.4" stroke="#e84a5a" stroke-width="1.100" stroke-linecap="round"/><path d="M20.7 11.7 L23.3 8.0" stroke="#e84a5a" stroke-width="1.100" stroke-linecap="round"/><path d="M55.2 54.2 L69.8 15.7" stroke="#e8a868" stroke-width="4.1" stroke-linecap="round"/><path d="M69.8 15.7 L69.1 11.3" stroke="#e0905a" stroke-width="1.100" stroke-linecap="round"/><path d="M69.8 15.7 L70.5 11.3" stroke="#e0905a" stroke-width="1.100" stroke-linecap="round"/><path d="M69.8 15.7 L71.8 11.7" stroke="#e0905a" stroke-width="1.100" stroke-linecap="round"/><path d="M69.8 15.7 L72.9 12.4" stroke="#e0905a" stroke-width="1.100" stroke-linecap="round"/><path d="M135.6 52.9 L139.0 22.7" stroke="#c86a38" stroke-width="3.4" stroke-linecap="round"/><path d="M139.0 22.7 L137.3 18.5" stroke="#e0905a" stroke-width="1.100" stroke-linecap="round"/><path d="M139.0 22.7 L138.6 18.2" stroke="#e0905a" stroke-width="1.100" stroke-linecap="round"/><path d="M139.0 22.7 L139.9 18.3" stroke="#e0905a" stroke-width="1.100" stroke-linecap="round"/><path d="M139.0 22.7 L141.2 18.7" stroke="#e0905a" stroke-width="1.100" stroke-linecap="round"/><path d="M14.2 47.4 L7.5 17.0" stroke="#d07840" stroke-width="3.0" stroke-linecap="round"/><path d="M7.5 17.0 L4.5 13.6" stroke="#e8b070" stroke-width="1.100" stroke-linecap="round"/><path d="M7.5 17.0 L5.6 12.9" stroke="#e8b070" stroke-width="1.100" stroke-linecap="round"/><path d="M7.5 17.0 L6.9 12.5" stroke="#e8b070" stroke-width="1.100" stroke-linecap="round"/><path d="M7.5 17.0 L8.3 12.5" stroke="#e8b070" stroke-width="1.100" stroke-linecap="round"/><path d="M71.9 51.6 L73.1 18.2" stroke="#c86a38" stroke-width="2.8" stroke-linecap="round"/><path d="M73.1 18.2 L71.1 14.1" stroke="#e0905a" stroke-width="1.100" stroke-linecap="round"/><path d="M73.1 18.2 L72.4 13.7" stroke="#e0905a" stroke-width="1.100" stroke-linecap="round"/><path d="M73.1 18.2 L73.7 13.7" stroke="#e0905a" stroke-width="1.100" stroke-linecap="round"/><path d="M73.1 18.2 L75.0 14.1" stroke="#e0905a" stroke-width="1.100" stroke-linecap="round"/><path d="M75.5 48.8 L81.4 16.3" stroke="#b05a30" stroke-width="2.7" stroke-linecap="round"/><path d="M81.4 16.3 L79.9 12.1" stroke="#e0905a" stroke-width="1.100" stroke-linecap="round"/><path d="M81.4 16.3 L81.3 11.8" stroke="#e0905a" stroke-width="1.100" stroke-linecap="round"/><path d="M81.4 16.3 L82.6 12.0" stroke="#e0905a" stroke-width="1.100" stroke-linecap="round"/><path d="M81.4 16.3 L83.8 12.6" stroke="#e0905a" stroke-width="1.100" stroke-linecap="round"/><path d="M57.8 47.7 L61.1 14.5" stroke="#d07840" stroke-width="3.5" stroke-linecap="round"/><path d="M61.1 14.5 L59.4 10.3" stroke="#c8602e" stroke-width="1.100" stroke-linecap="round"/><path d="M61.1 14.5 L60.7 10.0" stroke="#c8602e" stroke-width="1.100" stroke-linecap="round"/><path d="M61.1 14.5 L62.0 10.1" stroke="#c8602e" stroke-width="1.100" stroke-linecap="round"/><path d="M61.1 14.5 L63.3 10.5" stroke="#c8602e" stroke-width="1.100" stroke-linecap="round"/><path d="M78.2 48.9 L75.9 21.5" stroke="#e8a868" stroke-width="3.8" stroke-linecap="round"/><path d="M75.9 21.5 L73.4 17.7" stroke="#d8784a" stroke-width="1.100" stroke-linecap="round"/><path d="M75.9 21.5 L74.6 17.2" stroke="#d8784a" stroke-width="1.100" stroke-linecap="round"/><path d="M75.9 21.5 L75.9 17.0" stroke="#d8784a" stroke-width="1.100" stroke-linecap="round"/><path d="M75.9 21.5 L77.3 17.2" stroke="#d8784a" stroke-width="1.100" stroke-linecap="round"/><path d="M138.2 50.6 L140.4 21.7" stroke="#b8522c" stroke-width="2.5" stroke-linecap="round"/><path d="M140.4 21.7 L138.5 17.6" stroke="#e84a5a" stroke-width="1.100" stroke-linecap="round"/><path d="M140.4 21.7 L139.8 17.3" stroke="#e84a5a" stroke-width="1.100" stroke-linecap="round"/><path d="M140.4 21.7 L141.1 17.3" stroke="#e84a5a" stroke-width="1.100" stroke-linecap="round"/><path d="M140.4 21.7 L142.4 17.7" stroke="#e84a5a" stroke-width="1.100" stroke-linecap="round"/><path d="M131.4 56.2 L139.5 14.1" stroke="#a84828" stroke-width="3.8" stroke-linecap="round"/><path d="M139.5 14.1 L138.2 9.8" stroke="#e0905a" stroke-width="1.100" stroke-linecap="round"/><path d="M139.5 14.1 L139.5 9.6" stroke="#e0905a" stroke-width="1.100" stroke-linecap="round"/><path d="M139.5 14.1 L140.8 9.7" stroke="#e0905a" stroke-width="1.100" stroke-linecap="round"/><path d="M139.5 14.1 L142.0 10.3" stroke="#e0905a" stroke-width="1.100" stroke-linecap="round"/><path d="M70.8 44.4 L70.0 29.4" stroke="#4a1c10" stroke-width="2.4" stroke-linecap="round" opacity=".7"/><path d="M77.5 45.0 L84.3 22.3" stroke="#4a1c10" stroke-width="2.2" stroke-linecap="round" opacity=".7"/><path d="M11.7 40.5 L5.1 17.2" stroke="#4a1c10" stroke-width="2.6" stroke-linecap="round" opacity=".7"/><path d="M89.6 44.9 L83.0 22.8" stroke="#4a1c10" stroke-width="1.7" stroke-linecap="round" opacity=".7"/><path d="M71.4 40.4 L67.7 17.1" stroke="#4a1c10" stroke-width="1.7" stroke-linecap="round" opacity=".7"/><path d="M7.4 50.1 L8.8 31.9" stroke="#4a1c10" stroke-width="2.5" stroke-linecap="round" opacity=".7"/><path d="M126.8 55.3 L122.9 34.1" stroke="#4a1c10" stroke-width="2.2" stroke-linecap="round" opacity=".7"/><path d="M28.1 40.2 L30.4 21.7" stroke="#4a1c10" stroke-width="1.8" stroke-linecap="round" opacity=".7"/><path d="M42.8 45.5 L43.0 23.8" stroke="#4a1c10" stroke-width="2.4" stroke-linecap="round" opacity=".7"/><path d="M118.7 46.3 L124.3 23.9" stroke="#4a1c10" stroke-width="1.6" stroke-linecap="round" opacity=".7"/><path d="M146.4 51.6 L146.0 37.7" stroke="#4a1c10" stroke-width="2.4" stroke-linecap="round" opacity=".7"/><path d="M142.9 46.0 L147.4 26.6" stroke="#4a1c10" stroke-width="2.7" stroke-linecap="round" opacity=".7"/><path d="M148.2 47.4 L144.5 26.6" stroke="#4a1c10" stroke-width="2.6" stroke-linecap="round" opacity=".7"/><path d="M128.5 50.3 L124.7 28.5" stroke="#4a1c10" stroke-width="2.8" stroke-linecap="round" opacity=".7"/><ellipse cx="8.9" cy="56.8" rx="6.500" ry="4" fill="#8a8a2a"/><circle cx="8.9" cy="49.8" r="3.6" fill="#3a2216"/><ellipse cx="20.6" cy="49.6" rx="6.500" ry="4" fill="#a8a030"/><circle cx="20.6" cy="42.6" r="2.9" fill="#3a2216"/><ellipse cx="27.5" cy="51.4" rx="6.500" ry="4" fill="#8a8a2a"/><circle cx="27.5" cy="44.4" r="3.0" fill="#3a2216"/><ellipse cx="40.7" cy="56.2" rx="6.500" ry="4" fill="#c8b838"/><circle cx="40.7" cy="49.2" r="3.4" fill="#3a2216"/><ellipse cx="51.4" cy="55.0" rx="6.500" ry="4" fill="#c8b838"/><circle cx="51.4" cy="48.0" r="3.1" fill="#3a2216"/><ellipse cx="67.1" cy="56.2" rx="6.500" ry="4" fill="#b89028"/><circle cx="67.1" cy="49.2" r="2.7" fill="#3a2216"/><ellipse cx="78.1" cy="54.2" rx="6.500" ry="4" fill="#b89028"/><circle cx="78.1" cy="47.2" r="3.5" fill="#3a2216"/><ellipse cx="90.0" cy="56.5" rx="6.500" ry="4" fill="#a8a030"/><circle cx="90.0" cy="49.5" r="3.4" fill="#3a2216"/><ellipse cx="101.6" cy="52.6" rx="6.500" ry="4" fill="#8a8a2a"/><circle cx="101.6" cy="45.6" r="3.2" fill="#3a2216"/><ellipse cx="114.1" cy="55.4" rx="6.500" ry="4" fill="#8a8a2a"/><circle cx="114.1" cy="48.4" r="2.9" fill="#3a2216"/><ellipse cx="127.0" cy="56.5" rx="6.500" ry="4" fill="#8a8a2a"/><circle cx="127.0" cy="49.5" r="2.8" fill="#3a2216"/><ellipse cx="140.1" cy="56.7" rx="6.500" ry="4" fill="#8a8a2a"/><circle cx="140.1" cy="49.7" r="2.9" fill="#3a2216"/><ellipse cx="150.0" cy="51.1" rx="6.500" ry="4" fill="#a8a030"/><circle cx="150.0" cy="44.1" r="3.1" fill="#3a2216"/></g></svg>
          <div class="abs" style="left:3px;top:3px;width:7px;height:7px;border-radius:50%;background:#e62b1e"></div>
          <div class="tt" style="left:12px;top:3.500px;width:108px;font-size:4.300px;line-height:6px;color:#f6ebe6;text-align:justify;text-align-last:justify;text-shadow:0 0 1px #5a2a1a">How you can be good at math, and other surprising facts about le...</div>
          <div class="abs" style="left:128px;top:3px;width:5px;height:5px;border-radius:50%;background:#fff;box-shadow:16px 0 0 #fff"></div>
          <div class="abs" style="left:72px;top:37px;width:13px;height:13px;border-radius:50%;border:2px solid #f0e6dc;border-left-color:transparent"></div>
          <div class="abs" style="left:0;top:55px;width:157px;height:31px;background:rgba(22,16,14,.88)"></div>
          <div class="tt" style="left:6px;top:55.500px;font-size:3.600px;line-height:5px;color:#e8e8e8;font-weight:bold">More videos</div><div class="abs" style="left:146px;top:56px;width:3px;height:3px;background:#ddd"></div>
          <div class="abs" style="left:4px;top:63px;width:35px;height:19px;background:#241f1e"></div><div class="abs" style="left:10px;top:67px;width:10px;height:3px;background:#d0221a"></div><div class="abs" style="left:27px;top:66px;width:5px;height:16px;background:#4a4a4e;border-radius:2px 2px 0 0"></div>
          <div class="abs" style="left:42px;top:63px;width:35px;height:19px;background:linear-gradient(90deg,#2a2426,#3a2f35 60%,#a0303a 75%,#5a3a7a)"></div>
          <div class="abs" style="left:80px;top:63px;width:35px;height:19px;background:#2a2422"></div><div class="abs" style="left:86px;top:65px;width:6px;height:7px;border-radius:3px;background:#d0a890"></div><div class="abs" style="left:83px;top:71px;width:12px;height:11px;background:#555"></div><div class="abs" style="left:98px;top:66px;width:15px;height:15px;background:#f4f0f4"></div>
          <div class="abs" style="left:117px;top:63px;width:35px;height:19px;background:linear-gradient(180deg,#23346a,#1d2444)"></div><div class="abs" style="left:118px;top:69px;font-size:9px;line-height:11px;font-weight:bold;color:#c8202a;letter-spacing:-.5px">D<span style="font-size:6px;vertical-align:top">x</span><span style="color:#aab;font-weight:normal">laan</span></div>
          <div class="abs" style="left:0;top:85px;width:157px;height:3px;background:linear-gradient(90deg,#5a3020,#b06a30,#7a8a40,#a04a30,#c08a40,#5a6a30,#a04028)"></div>
        </div>
        <div class="abs" style="left:20px;top:208.5px;width:292px;height:1.4px;background:#e8e8e8"></div>
        <div class="abs" style="left:18px;top:207px;width:5px;height:5px;border-radius:50%;background:#fff"></div>
        <div class="abs" style="left:314px;top:207px;width:4px;height:4px;border-radius:50%;border:1px solid #ddd"></div>
        <div class="abs" style="left:0;top:210px;width:16px;height:4px;background:#2a3a3e"></div>
        <div class="dur" style="background:#000">47:44</div>
      </div>
      <div class="title" style="letter-spacing:-.45px">PlayPosit_</div><div class="dots"><i style="top:0"></i><i style="top:7px"></i><i style="top:14px"></i></div>
      <div class="owner" style="left:21px">Peter Tea</div>
    </div>
    <!-- Card 5 -->
    <div class="card r2" style="left:540.300px;top:509.700px">
      <div class="thumb ln" style="background:#fff">
        <div class="abs" style="left:0;top:0;width:382px;height:10px;background:#dee1e6"></div>
        <div class="abs" style="left:103px;top:1px;width:50px;height:9px;background:#fff;border-radius:3px 3px 0 0"></div>
        <div class="abs" style="left:8px;top:3px;width:4px;height:4px;border-radius:50%;background:#1a9aa8;box-shadow:50px 0 0 #1a9aa8,99px 0 0 #8aa;  "></div>
        <div class="abs" style="left:150px;top:3px;width:4px;height:4px;border-radius:50%;background:#e88;box-shadow:50px 0 0 #e8a820,101px 0 0 #6a3ab0"></div>
        <div class="tt" style="left:14px;top:2px;width:31px;font-size:3.300px;line-height:6px;color:#6a6f76">Ryan Turnitin assig</div><div class="tt" style="left:64px;top:2px;width:31px;font-size:3.300px;line-height:6px;color:#6a6f76">Ryan Turnitin assig</div><div class="tt" style="left:113px;top:2px;width:31px;font-size:3.300px;line-height:6px;color:#333">Polar Ice Caps.doc</div><div class="tt" style="left:164px;top:2px;width:31px;font-size:3.300px;line-height:6px;color:#6a6f76">Creating an assign</div><div class="tt" style="left:214px;top:2px;width:31px;font-size:3.300px;line-height:6px;color:#6a6f76">Copy of Turnitin Si</div><div class="tt" style="left:265px;top:2px;width:31px;font-size:3.300px;line-height:6px;color:#6a6f76">Similarity Training</div>
        <div class="abs" style="left:47px;top:3px;width:3px;height:3px;background:#666;box-shadow:50px 0 0 #666,99px 0 0 #666,150px 0 0 #666,200px 0 0 #666,249px 0 0 #666,260px 0 0 #666,312px 0 0 #888,326px 0 0 #888"></div>
        <div class="abs" style="left:6px;top:14px;width:4px;height:3px;background:#888;box-shadow:9px 0 0 #888,19px 0 0 #666,28px 0 0 #666"></div>
        <div class="tt" style="left:52px;top:12px;font-size:3.500px;line-height:7px;color:#444"><b style="font-weight:normal;color:#222">sdccd.turnitin.com</b>/viewer/submissions/oid:7957:150142847?locale=en</div>
        <div class="abs" style="left:237px;top:13px;width:4px;height:4px;background:#888;box-shadow:10px 0 0 #888,22px 0 0 #1b2a6b,31px 0 0 #2a6be0,41px 0 0 #3a8ad8,50px 0 0 #999,60px 0 0 #444,69px 0 0 #999,80px 0 0 #236,89px 0 0 #555,98px 0 0 #777,107px 0 0 #333,117px 0 0 #555,127px 0 0 #5a4ab8"></div>
        <div class="abs" style="left:5px;top:23px;width:5px;height:4px;background:#c9a56a;box-shadow:20px 0 0 #e8b820,46px 0 0 #e8b820,65px 0 0 #2a7ad0,98px 0 0 #2a8a48,142px 0 0 #333,178px 0 0 #5a2a9a,222px 0 0 #5a2a9a,268px 0 0 #c04060,295px 0 0 #3a7ae0,337px 0 0 #99a"></div>
        <div class="tt" style="left:12px;top:22px;font-size:3.300px;line-height:6px;color:#4a4a4a">Apps</div><div class="tt" style="left:32px;top:22px;font-size:3.300px;line-height:6px;color:#4a4a4a">Turn It In</div><div class="tt" style="left:58px;top:22px;font-size:3.300px;line-height:6px;color:#4a4a4a">Stuff</div><div class="tt" style="left:78px;top:22px;font-size:3.300px;line-height:6px;color:#4a4a4a">GS Roadmap</div><div class="tt" style="left:110px;top:22px;font-size:3.300px;line-height:6px;color:#4a4a4a">NOA HE PES Sessio...</div><div class="tt" style="left:155px;top:22px;font-size:3.300px;line-height:6px;color:#4a4a4a">PES HED Trello</div><div class="tt" style="left:190px;top:22px;font-size:3.300px;line-height:6px;color:#4a4a4a">NOA HE PES - Impl...</div><div class="tt" style="left:234px;top:22px;font-size:3.300px;line-height:6px;color:#4a4a4a">NOA HE PES Onboa...</div><div class="tt" style="left:280px;top:22px;font-size:3.300px;line-height:6px;color:#4a4a4a">HD Tools</div><div class="tt" style="left:307px;top:22px;font-size:3.300px;line-height:6px;color:#4a4a4a">Partner Dashboard</div><div class="tt" style="left:349px;top:22px;font-size:3.300px;line-height:6px;color:#4a4a4a">Projects</div>
        <div class="abs" style="left:0;top:30px;width:382px;height:1px;background:#e4e4e4"></div>
        <div class="abs" style="left:0;top:31px;width:382px;height:19px;background:#0f70c8"></div>
        <div class="abs" style="left:10px;top:36px;font-size:6px;line-height:9px;color:#e8f1fa;white-space:nowrap">Polar Ice Caps.docx</div>
        <div class="abs" style="left:343px;top:35px;font-size:6.6px;line-height:9px;color:#e8f1fa;white-space:nowrap">turnitin</div>
        <div class="abs" style="left:368px;top:36px;width:7px;height:8px;border:1px solid #d4e6f8;border-radius:1px 1px 4px 4px"></div>
        <div class="abs" style="left:0;top:50px;width:20px;height:152px;background:#ebebeb"></div>
        <div class="abs" style="left:245px;top:50px;width:19px;height:152px;background:#ebebeb"></div>
        <div class="abs" style="left:264px;top:50px;width:5px;height:152px;background:#f6f6f6"></div>
        <div class="abs" style="left:265px;top:74px;width:3px;height:36px;background:#c4c4c4"></div>
        <div class="dl" style="top:50.19px;width:171px">record for least amount of sea ice on that date, and 394,000 square kilometers (153,000 square</div><div class="dl" style="top:56.01px;width:157px">miles) below 2012, the year of the record low. “The ice was further north than normal</div><div class="dl" style="top:61.83px;width:161px">everywhere except the southeastern Beaufort Sea, the Canadian Archipelago and the East</div><div class="dl" style="top:67.65px;width:29px">Greenland Sea.”</div><div class="dl" style="top:76.39px;width:165px">An ice shelf is a thick slab of ice, attached to a coastline and extending out over the ocean,</div><div class="dl" style="top:82.21px;width:164px">according to the National Snow and Ice Data Center.  Some shelves persist for thousands of</div><div class="dl" style="top:88.03px;width:41px">years,  the center said.</div><div class="dl" style="top:96.79px;width:163px">So what’s going on up there? Though the planet is getting hotter worldwide due to climate</div><div class="dl" style="top:102.61px;width:170px">change, the Arctic has been warming at a rate twice that of the rest of the world, according to</div><div class="dl" style="top:108.43px;width:172px">the National Oceanic and Atmospheric Administration. This summer has been very warm: Arctic</div><div class="dl" style="top:114.25px;width:166px">sea ice melted to its lowest July level on record and in June  a town in Siberia soared to 100.4</div><div class="dl" style="top:120.07px;width:81px">degrees, which is a record high for the Arctic.</div><div class="dl" style="top:128.49px;width:164px">All though I do think it is alarming how fast the ice caps are melting I am actually adding this</div><div class="dl" style="top:134.31px;width:169px">material so that I do not have a match or any similarity.  Most of the items I have added to this</div><div class="dl" style="top:140.13px;width:168px">paper have been copied from the internet or other sources I have found.  I think this is a really</div><div class="dl" style="top:145.95px;width:165px">important tool for students to use during the writing process.  If they can use this to improve</div><div class="dl" style="top:151.77px;width:163px">their writing and no long plagiarize that would be amazing.  Just remember this is not just a</div><div class="dl" style="top:157.59px;width:165px">punitive tool but a writing tool as well.  As always please know that we will not tell you</div><div class="dl" style="top:163.41px;width:163px">something is plagiarized  we are merely showing you where your student’s writing matches</div><div class="dl" style="top:169.23px;width:57px">other sources in our data bases.</div><div class="dl" style="top:178.19px;width:159px">Greenhouse gas emissions, meanwhile, climbed even higher this decade. In 2018, carbon</div><div class="dl" style="top:184.01px;width:171px">dioxide concentrations peaked at 394 parts per million (ppm), according to observations at the</div><div class="dl" style="top:189.83px;width:164px">Mauna Loa Observatory. This year, the observatory reported a record high of 414.8 ppm, a</div><div class="dl" style="top:195.65px;width:95px">concentration not seen on Earth for millions of years.</div>
        <div class="abs" style="left:45px;top:76px;width:4px;height:4px;border-radius:50%;background:#1a5fb0"></div>
        <div class="abs" style="left:45px;top:178px;width:4px;height:4px;border-radius:50%;background:#2a7a30"></div>
        <div class="abs" style="left:24px;top:86px;width:5px;height:5px;background:#e8402a"></div>
        <!-- right panel -->
        <div class="abs" style="left:269px;top:50px;width:89px;height:152px;background:#fff"></div>
        <div class="abs" style="left:358px;top:50px;width:24px;height:152px;background:#f7f7f7"></div>
        <div class="abs" style="left:272px;top:53px;width:6px;height:6px;border-radius:50%;border:1px solid #555"></div>
        <div class="abs" style="left:292px;top:51px;width:45px;height:10px;border:1px solid #2a78c8;border-radius:2px"></div>
        <div class="tt" style="left:294px;top:52.500px;font-size:4.700px;line-height:7px;color:#333">Sources Overview ⌄</div>
        <div class="abs" style="left:349px;top:53px;width:6px;height:6px;border-radius:50%;background:#444"></div>
        <div class="abs" style="left:269px;top:63px;width:89px;height:28px;background:#e9f2fb"></div>
        <div class="tt" style="left:275px;top:65.500px;font-size:3.800px;line-height:5.500px;color:#222;font-weight:bold">Sources Overview</div>
        <div class="tt" style="left:275px;top:70.500px;font-size:3.600px;line-height:5px;color:#7a8288">View a list of the top sources found in the<br>document. Overlapping sources will not be<br>displayed.</div>
        <div class="tt" style="left:275px;top:95.500px;font-size:3.800px;line-height:5.500px;color:#222;font-weight:bold">All Sources</div>
        <div class="tt" style="left:275px;top:100.500px;font-size:3.600px;line-height:5px;color:#8a8a8a">View a list of all the sources that have<br>matched against this document, including<br>any overlapping sources.</div>
        <div class="abs" style="left:271px;top:121px;width:80px;height:14px;background:#fff;box-shadow:0 .5px 2px rgba(0,0,0,.3)"></div>
        <div class="abs" style="left:271px;top:139px;width:80px;height:14px;background:#fff;box-shadow:0 .5px 2px rgba(0,0,0,.3)"></div>
        <div class="abs" style="left:271px;top:157px;width:80px;height:14px;background:#fff;box-shadow:0 .5px 2px rgba(0,0,0,.3)"></div>
        <div class="abs" style="left:275px;top:124px;width:8px;height:8px;border-radius:50%;background:#1a7a90"></div>
        <div class="abs" style="left:275px;top:142px;width:8px;height:8px;border-radius:50%;background:#8a5ad0"></div>
        <div class="abs" style="left:275px;top:160px;width:8px;height:8px;border-radius:50%;background:#1f6a28"></div>
        <div class="tt" style="left:287px;top:122.500px;font-size:3.900px;line-height:5px;color:#444">link.springer.com</div><div class="tt" style="left:287px;top:140.500px;font-size:3.900px;line-height:5px;color:#444">nsidc.org</div><div class="tt" style="left:287px;top:158.500px;font-size:3.900px;line-height:5px;color:#444">www.vox.com</div>
        <div class="tt" style="left:287px;top:127.500px;font-size:2.900px;line-height:4px;color:#999">INTERNET</div><div class="tt" style="left:287px;top:145.500px;font-size:2.900px;line-height:4px;color:#999">INTERNET</div><div class="tt" style="left:287px;top:163.500px;font-size:2.900px;line-height:4px;color:#999">INTERNET</div>
        <div class="abs" style="left:331px;top:123px;font-size:7px;line-height:9px;font-weight:bold;color:#1a7a90">15%</div>
        <div class="abs" style="left:331px;top:141px;font-size:7px;line-height:9px;font-weight:bold;color:#8a5ad0">14%</div>
        <div class="abs" style="left:331px;top:159px;font-size:7px;line-height:9px;font-weight:bold;color:#1f6a28">14%</div>
        <div class="abs" style="left:367px;top:57px;font-size:9px;line-height:10px;color:#e02a1a">2</div><div class="abs" style="left:373px;top:58px;width:4px;height:3px;background:#e02a1a"></div>
        <div class="tt" style="left:365.500px;top:67px;font-size:3.300px;line-height:5px;color:#666">Flags</div>
        <div class="abs" style="left:359px;top:79px;width:22px;height:28px;background:#fbe0b0;border:1px solid #e8a840;border-radius:2px"></div>
        <div class="abs" style="left:364px;top:82px;font-size:8px;line-height:10px;color:#b06a18">59</div>
        <div class="tt" style="left:359px;top:93px;width:22px;text-align:center;font-size:3.200px;line-height:4.500px;color:#b8782a;white-space:normal">Overall Similarity</div>
        <!-- floating buttons -->
        <div class="abs" style="left:6px;top:184.500px;width:23px;height:13px;background:#8f9097;border-radius:2px"></div>
        <div class="abs" style="left:32px;top:184.500px;width:29px;height:13px;background:#8f9097;border-radius:2px"></div>
        <div class="abs" style="left:231px;top:184.500px;width:33px;height:13px;background:#8f9097;border-radius:2px"></div>
        <div class="tt" style="left:8.500px;top:187.500px;font-size:4.300px;line-height:7px;color:#e4e4e8">Share ⌄</div>
        <div class="abs" style="left:37px;top:187.500px;width:5px;height:5px;border-radius:50%;border:1px solid #eee;box-shadow:14px 0 0 -0px rgba(238,238,238,0)"></div><div class="abs" style="left:51px;top:187.500px;width:5px;height:5px;border-radius:50%;border:1px solid #eee"></div>
        <div class="tt" style="left:235px;top:187.500px;font-size:4.300px;line-height:7px;color:#e4e4e8">Page 1 of 2</div>
        <!-- taskbar -->
        <div class="abs" style="left:0;top:202px;width:382px;height:12px;background:#1d2836"></div>
        <div class="abs" style="left:16px;top:202px;width:101px;height:12px;background:#e9ecef"></div>
        <div class="abs" style="left:4px;top:205px;width:6px;height:6px;background:#e8eef6"></div>
        <div class="abs" style="left:20px;top:205px;width:4px;height:4px;border-radius:50%;border:1px solid #333"></div>
        <div class="tt" style="left:27px;top:204.500px;font-size:4px;line-height:7px;color:#444">Type here to search</div>
        <div class="abs" style="left:121px;top:205px;width:5px;height:5px;border-radius:50%;border:1px solid #eee"></div>
        <div class="abs" style="left:136px;top:205px;width:4px;height:5px;border:1px solid #aaa"></div>
        <div class="abs" style="left:151px;top:204px;width:7px;height:7px;background:#e8b830;box-shadow:15px 0 0 #2a8ad8,30px 0 0 #5a5f6a,45px 0 0 #c8c8d0,59px 0 0 #e84a2a,74px 0 0 #2a5ab8,89px 0 0 #e8702a,104px 0 0 #3a6ae0"></div>
        <div class="abs" style="left:207px;top:202px;width:14px;height:12px;background:#3a4656"></div><div class="abs" style="left:210px;top:204px;width:7px;height:7px;background:#e84a2a;border-radius:50%"></div>
        <div class="abs" style="left:312px;top:206px;width:3px;height:3px;background:#3ac06a;box-shadow:6px 0 0 #c8d0d8,12px 0 0 #c8d0d8"></div>
        <div class="abs" style="left:334px;top:206.500px;width:42px;height:1.6px;background:#d0d6de"></div>
        <div class="abs" style="left:328px;top:184px;width:48px;height:23px;border-radius:4px;background:rgba(0,0,0,.86);color:#fff;font-size:16px;line-height:23px;text-align:center;letter-spacing:-.2px">35:23</div>
      </div>
      <div class="title" style="letter-spacing:-.12px">Turnitin_Training</div><div class="dots" style="left:352px"><i style="top:0"></i><i style="top:7px"></i><i style="top:14px"></i></div>
      <div class="owner" style="left:21px">Peter Tea</div>
    </div>
    <!-- Card 6 -->
    <div class="card r2" style="left:947.400px;top:509.700px">
      <div class="q" style="left:5px;top:4px;height:103px;background:#000">
        <div class="abs" style="left:9.600px;top:5.600px;width:63px;height:91.400px;background:#fff;overflow:hidden">
          <svg class="abs" style="left:0;top:0" width="63" height="92" viewBox="0 0 63 92">
            <defs><filter id="bbl" x="-5%" y="-5%" width="110%" height="110%"><feGaussianBlur stdDeviation=".35"/></filter></defs>
            <g filter="url(#bbl)">
            <path d="M4.200 24 L10.800 23.700 L9 42 L5.500 38 Z" fill="#c23a2a"/>
            <path d="M10.800 23.700 L13.400 23.300 L9.500 43 L9 42 Z" fill="#3a2a20"/>
            <path d="M13.400 23.300 L16.700 17.400 L22.900 20.300 L9.500 44 Z" fill="#7aa83a"/>
            <path d="M22.900 20.300 L27.800 13.400 L58.700 31.600 L56 33 L31 20.500 L9.500 45 Z" fill="#26262a"/>
            <path d="M9.500 45 L31 20.500 L47 33 L10 48 Z" fill="#e8502a"/>
            <path d="M10 48 L47 33 L56 33 L58.700 31.600 L63 34 L63 36 L8 50 Z" fill="#ecdcb8"/>
            <path d="M8 50 L63 35.800 L63 41.700 L30 47 L7 51.500 Z" fill="#1f3a7a"/>
            <path d="M4 53 L63 41.700 L63 44 L2 54.500 Z" fill="#e0402a"/>
            <path d="M2 54.500 L63 44 L63 47.600 L1 51.800 Z" fill="#f0e4c8"/>
            <path d="M1 51.400 L63 47.600 L63 49 L1 52.600 Z" fill="#1f2a4a"/>
            <path d="M1 52.600 L63 49 L63 54 L1 53.600 Z" fill="#f4ecd8"/>
            <path d="M0.900 52.600 L63 54 L63 55.600 L0.900 54.200 Z" fill="#1a1a1a"/>
            <path d="M0.900 54.200 L63 55.600 L63 66.200 L4.800 57.800 L0.900 57 Z" fill="#f4efe6"/>
            <path d="M4.800 57.800 L63 66 L63 67.600 L8.100 59.600 L4.200 84 L0.900 85 L0.900 60 Z" fill="#1a8ac8"/>
            <path d="M8.100 59.600 L63 67.600 L63 75.200 L14 65.400 L4.200 84 Z" fill="#f1eadc"/>
            <path d="M14 65.400 L63 75.200 L63 76.800 L16.700 67.200 L5.500 91.400 L0.900 91.400 L4.200 84 Z" fill="#e8602a"/>
            <path d="M16.700 67.200 L63 76.800 L63 84.400 L30.500 77.900 L16.700 77.900 L11 80 Z" fill="#f6f2ea"/>
            <path d="M16.700 77.900 L27.800 78.500 L13.400 91.400 L5.500 91.400 L11 80 Z" fill="#c8601a"/>
            <path d="M27.800 78.500 L30.500 77.900 L63 84.400 L63 85.800 L31 79.600 L14.700 91.400 L13.400 91.400 Z" fill="#1e1e22"/>
            <path d="M31 79.600 L63 85.800 L63 91.400 L14.700 91.400 Z" fill="#efe4c8"/>
            </g>
          </svg>
        </div>
        <div class="abs" style="left:74.300px;top:5.600px;width:101.200px;height:91.400px;background:radial-gradient(ellipse 90% 80% at 38% 78%,#d6ecb6 0%,#c6e2a0 35%,#aed486 70%,#9cc974 100%)"></div>
        <div class="abs" style="left:72.400px;top:5.600px;width:2px;height:91.400px;background:#3e5c4c"></div>
        <div class="abs" style="left:78px;top:38.500px;font-size:9.300px;line-height:9.900px;color:#5a6650;white-space:nowrap;letter-spacing:.1px">Putting Yourself in<br>Your PowerPoint<br>Presentations</div>
        <div class="abs" style="left:139px;top:8px;width:30px;height:2px;background:#2a4a8a"></div><div class="abs" style="left:141px;top:12px;width:26px;height:1px;background:#7a8a6a"></div>
        <div class="abs" style="left:149px;top:78px;width:12px;height:12px;border-radius:6px;background:#e8e4e0"></div>
        <div class="abs" style="left:151px;top:81px;width:8px;height:8px;border-radius:4px;background:#d8a890"></div>
        <div class="abs" style="left:152px;top:86px;width:6px;height:6px;border-radius:0 0 3px 3px;background:#eceae6"></div>
        <div class="abs" style="left:144px;top:89px;width:22px;height:8px;border-radius:6px 6px 0 0;background:#8c8c8e"></div>
        <div class="abs" style="left:160px;top:94px;width:18px;height:2px;background:#aaa"></div>
      </div>
      <div class="q" style="left:194px;top:4px;height:103px;background:#5e6f7a">
        <div class="abs" style="left:0;top:0;width:9px;height:104px;background:#384853"></div>
        <div class="abs" style="left:0;top:0;width:185px;height:2px;background:#2f3d47"></div>
        <div class="abs" style="left:2px;top:6px;width:5px;height:5px;border-radius:50%;background:#56666f;box-shadow:0 9px 0 #56666f,0 18px 0 #56666f,0 27px 0 #6a7c86,0 36px 0 #56666f,0 45px 0 #56666f,0 54px 0 #56666f"></div>
        <div class="abs" style="left:12px;top:7px;width:8px;height:1.2px;background:#41627a;box-shadow:0 4px 0 #41627a,0 8px 0 #41627a,0 12px 0 #2f4456,0 16px 0 #41627a,0 20px 0 #41627a,0 24px 0 #41627a,0 28px 0 #41627a,0 32px 0 #41627a,0 36px 0 #41627a,0 40px 0 #41627a,0 44px 0 #41627a,0 48px 0 #41627a,0 52px 0 #41627a,0 56px 0 #41627a"></div>
        <div class="abs" style="left:140px;top:6px;width:12px;height:4px;background:#60717c;box-shadow:15px 0 0 #60717c"></div><div class="abs" style="left:170px;top:6px;width:9px;height:4px;background:#2a6a9a"></div>
        <div class="abs" style="left:33px;top:17px;width:148px;height:6px;background:#63747f"></div>
        <div class="abs" style="left:33px;top:24px;width:148px;height:1px;background:#67798a;box-shadow:0 6px 0 #67798a,0 13px 0 #67798a,0 20px 0 #67798a,0 26px 0 #67798a,0 33px 0 #67798a,0 40px 0 #67798a,0 46px 0 #67798a,0 53px 0 #67798a"></div>
        <div class="abs" style="left:42px;top:20px;width:40px;height:1.2px;background:#3b4852;box-shadow:2px 6.500px 0 #3b4852,4px 13px 0 #3b4852,4px 19.500px 0 #3b4852,4px 26px 0 #3b4852,2px 33px 0 #3b4852,4px 39.500px 0 #3b4852,4px 46px 0 #3b4852,2px 52px 0 #3b4852"></div>
        <div class="abs" style="left:173px;top:26px;width:2.500px;height:2.500px;border-radius:50%;background:#2f5a3f;box-shadow:0 6.500px 0 #2f5a3f,0 13px 0 #2f5a3f,0 19.500px 0 #2f5a3f,0 26px 0 #2f5a3f,0 32.500px 0 #2f5a3f,0 45px 0 #2f5a3f"></div>
        <div class="abs" style="left:58px;top:36px;width:83px;height:59px;background:#fff;box-shadow:0 1px 4px rgba(0,0,0,.4)"></div>
        <div class="abs" style="left:58px;top:36px;width:83px;height:7px;background:#f7f7f7;border-bottom:.5px solid #ddd"></div>
        <div class="abs" style="left:62px;top:39px;width:50px;height:1.2px;background:#555"></div>
        <div class="abs" style="left:62px;top:48px;width:9px;height:1.1px;background:#666;box-shadow:24px 0 0 #888,34px 0 0 #888,44px 0 0 #888"></div>
        <div class="abs" style="left:62px;top:52px;width:55px;height:1px;background:#999"></div>
        <div class="abs" style="left:62px;top:54px;width:72px;height:18px;border:.7px solid #999;background:#fff"></div>
        <div class="abs" style="left:63px;top:55px;width:68px;height:2px;background:#c8c8c8"></div>
        <div class="abs" style="left:63px;top:58.500px;width:8px;height:1px;background:#666;box-shadow:2px 2.200px 0 #666,6px 4.400px 0 #666,12px 6.600px 0 #666"></div>
        <div class="abs" style="left:62px;top:76px;width:7px;height:1px;background:#666;box-shadow:0 6px 0 #666"></div>
        <div class="abs" style="left:71px;top:73.500px;width:23px;height:5px;border:.7px solid #7aa;border-radius:2px"></div>
        <div class="abs" style="left:71px;top:80.500px;width:22px;height:4px;border:.6px solid #bbb"></div>
        <div class="abs" style="left:58px;top:87px;width:83px;height:8px;background:#f3f3f3"></div>
        <div class="abs" style="left:123px;top:88.500px;width:5px;height:5px;border:.6px solid #99a;background:#fff"></div>
        <div class="abs" style="left:130px;top:88.500px;width:9px;height:5px;background:#0a72c0;border-radius:1px"></div>
      </div>
      <div class="q ln" style="left:5px;top:111px;background:#fff">
        <div class="abs" style="left:0;top:0;width:185px;height:5px;background:#2b2b2e"></div>
        <div class="abs" style="left:0;top:3px;width:185px;height:2px;background:#3a3a3e"></div>
        <div class="abs" style="left:20px;top:1px;width:60px;height:1px;background:#777;box-shadow:70px 0 0 #666"></div>
        <div class="abs" style="left:0;top:5px;width:9px;height:99px;background:#394b58"></div>
        <div class="abs" style="left:1px;top:6px;width:7px;height:7px;border-radius:50%;background:#2aa0a8"></div>
        <div class="abs" style="left:2.500px;top:17px;width:4px;height:4px;border-radius:1px;background:#c8d2d8;box-shadow:0 8px 0 #c8d2d8,0 16px 0 #c8d2d8,0 32px 0 #c8d2d8,0 40px 0 #c8d2d8,0 48px 0 #c8d2d8,0 56px 0 #c8d2d8,0 64px 0 #c8d2d8"></div>
        <div class="abs" style="left:0;top:30px;width:9px;height:8px;background:#fff"></div><div class="abs" style="left:2.500px;top:32px;width:4px;height:4px;background:#2a7ab0"></div>
        <div class="abs" style="left:12px;top:8px;width:4px;height:1.2px;background:#777"></div>
        <div class="abs" style="left:18px;top:8px;width:40px;height:1.200px;background:#4a8ac0;box-shadow:46px 0 0 #7ab;  "></div>
        <div class="abs" style="left:146px;top:7px;width:15px;height:3px;border:.6px solid #bbb;box-shadow:19px 0 0 -.5px #ddd"></div><div class="abs" style="left:164px;top:7px;width:18px;height:3px;border:.6px solid #bbb"></div>
        <div class="abs" style="left:12px;top:14px;width:8px;height:1.1px;background:#5a9ad0;box-shadow:0 3.100px 0 #5a9ad0,0 6.200px 0 #5a9ad0,0 9.300px 0 #5a9ad0,0 12.400px 0 #5a9ad0,0 15.500px 0 #5a9ad0,0 18.600px 0 #333,0 21.700px 0 #5a9ad0,0 24.800px 0 #5a9ad0,0 27.900px 0 #5a9ad0,0 31px 0 #5a9ad0,0 34.100px 0 #5a9ad0,0 37.200px 0 #5a9ad0,0 40.300px 0 #5a9ad0,0 43.400px 0 #5a9ad0,0 46.500px 0 #5a9ad0"></div>
        <div class="abs" style="left:26px;top:29px;width:2px;height:2px;border-radius:50%;background:#8a8;box-shadow:0 3.100px 0 #8a8,0 6.200px 0 #8a8,0 9.300px 0 #8a8,0 12.400px 0 #8a8,0 15.500px 0 #8a8,0 18.600px 0 #8a8,0 21.700px 0 #8a8,0 24.800px 0 #8a8"></div>
        <div class="abs" style="left:33px;top:12px;width:15px;height:4px;border:.6px solid #bbb;border-radius:1px"></div>
        <div class="abs" style="left:154px;top:12px;width:13px;height:4.500px;background:#1f9a4a;border-radius:1px"></div>
        <div class="abs" style="left:170px;top:12px;width:9px;height:4.500px;border:.6px solid #bbb;border-radius:1px"></div>
        <div class="abs" style="left:33px;top:20.500px;width:42px;height:2.200px;background:#999"></div>
        <div class="abs" style="left:33px;top:27px;width:14px;height:1.300px;background:#222"></div>
        <div class="abs" style="left:33px;top:30px;width:74px;height:1px;background:#aaa;box-shadow:0 2.500px 0 #aaa,0 5px 0 #aaa,0 7.500px 0 #aaa,0 10px 0 #aaa,0 12.500px 0 #aaa"></div>
        <div class="abs" style="left:33px;top:45px;width:58px;height:1.300px;background:#222"></div>
        <div class="abs" style="left:33px;top:48px;width:74px;height:1px;background:#aaa;box-shadow:0 2.500px 0 #aaa"></div>
        <div class="abs" style="left:33px;top:53px;width:26px;height:1.300px;background:#222"></div>
        <div class="abs" style="left:33px;top:56px;width:74px;height:1px;background:#aaa;box-shadow:0 2.500px 0 #aaa,0 5px 0 #aaa"></div>
        <div class="abs" style="left:33px;top:63px;width:9px;height:1.300px;background:#222"></div><div class="abs" style="left:43px;top:63px;width:16px;height:1.300px;background:#2a7ac0"></div>
        <div class="abs" style="left:33px;top:65.500px;width:74px;height:1px;background:#aaa;box-shadow:0 2.500px 0 #aaa,0 5px 0 #aaa"></div>
        <div class="abs" style="left:72px;top:62px;width:7px;height:7px;border-radius:50%;border:.6px solid #e0d040"></div>
        <div class="abs" style="left:33px;top:74px;width:40px;height:1.100px;background:#3a8ac8"></div>
        <div class="abs" style="left:33px;top:77px;width:146px;height:4px;background:#3c4043"></div>
        <div class="abs" style="left:120px;top:78.500px;width:50px;height:1px;background:#999"></div><div class="abs" style="left:130px;top:78px;width:4px;height:2px;background:#eee"></div>
        <div class="abs" style="left:33px;top:81px;width:146px;height:23px;background:#e6e6e6"></div>
        <div class="abs" style="left:177px;top:81px;width:2px;height:23px;background:#cfcfcf"></div>
        <div class="abs" style="left:56px;top:88px;width:98px;height:16px;background:#fff"></div>
        <div class="abs" style="left:67px;top:98px;width:9px;height:6px;background:#f0d020"></div><div class="abs" style="left:74px;top:97px;width:9px;height:7px;background:#e0201a;border-radius:2px 2px 0 0"></div>
      </div>
      <div class="q" style="left:194px;top:111px"></div>
      <div class="title">Test</div><div class="dots" style="left:352px"><i style="top:0"></i><i style="top:7px"></i><i style="top:14px"></i></div>
      <div class="owner" style="left:12px">Peter Tea</div>
    </div>
    <!--/CARDS-->
  </div>
  <div id="sb1"><div class="thumbbar" style="top:15px;height:251px"></div><svg class="abs" style="left:3px;top:3px" width="10" height="7" viewBox="0 0 10 7"><path d="M1 6 L5 1.800 L9 6" fill="none" stroke="#505050" stroke-width="1.800"/></svg><svg class="abs" style="left:3.500px;top:841.500px" width="10" height="7" viewBox="0 0 10 7"><path d="M1 1 L5 5.200 L9 1" fill="none" stroke="#505050" stroke-width="1.800"/></svg></div>
  <div id="sb2"><div class="thumbbar" style="top:15px;height:822px"></div><svg class="abs" style="left:3px;top:3px" width="10" height="7" viewBox="0 0 10 7"><path d="M1 6 L5 1.800 L9 6" fill="none" stroke="#505050" stroke-width="1.800"/></svg><svg class="abs" style="left:3.500px;top:844px" width="10" height="7" viewBox="0 0 10 7"><path d="M1 1 L5 5.200 L9 1" fill="none" stroke="#505050" stroke-width="1.800"/></svg></div>
</div>
<!--ANNOT-->
<!-- partially hidden button behind the menu -->
<div class="abs" style="left:1300px;top:129px;width:60px;height:38px;background:#f5f5f5;border:1px solid #d5d9dc;border-radius:4px;z-index:5"></div>
<div class="abs" style="left:1330px;top:137px;font-size:16px;line-height:22px;color:#0770a3;z-index:6">on</div>
<!-- record dropdown menu -->
<div class="abs" style="left:1181px;top:95px;width:154px;height:86px;border:2px solid #0b6fb0;border-top:none;border-radius:0 0 5px 5px;z-index:10"></div>
<div class="abs" style="left:1184px;top:96px;width:148px;height:83px;background:#fff;border:1px solid #c7cdd1;border-radius:3px;box-shadow:0 1px 3px rgba(0,0,0,.2);z-index:11"></div>
<div class="abs" style="left:1251px;top:90.500px;width:13px;height:13px;background:#fff;border:1px solid #c7cdd1;transform:rotate(45deg);z-index:11"></div>
<div class="abs" style="left:1186px;top:97px;width:144px;height:20px;background:#fff;z-index:12"></div>
<div class="abs mi" style="left:1197px;top:108px;z-index:13;letter-spacing:-.3px">Screen Capture</div>
<div class="abs mi" style="left:1197px;top:144px;z-index:13;letter-spacing:-.15px">Webcam Capture</div>
<!-- red annotations -->
<div class="redb" style="left:1220px;top:33px;width:75px;height:60px"></div>
<div class="redb" style="left:1181px;top:92px;width:154px;height:49px"></div>
<div class="redb" style="left:30px;top:623px;width:85px;height:60px"></div>
<div class="redc" style="left:1196px;top:1.500px;padding-top:1.500px">2</div>
<div class="redc" style="left:1146px;top:66.700px">3</div>
<div class="redc" style="left:-0.400px;top:597.800px"><svg class="abs" style="left:-3px;top:-3px" width="50" height="50" viewBox="0 0 50 50"><path d="M24.700 15.300 L27.900 15.300 L27.900 35.200 L24.500 35.200 L24.500 19.600 L20.700 22.600 L20 20 Z" fill="#fff"/></svg></div>
<!--/ANNOT-->
</body>
</html>
